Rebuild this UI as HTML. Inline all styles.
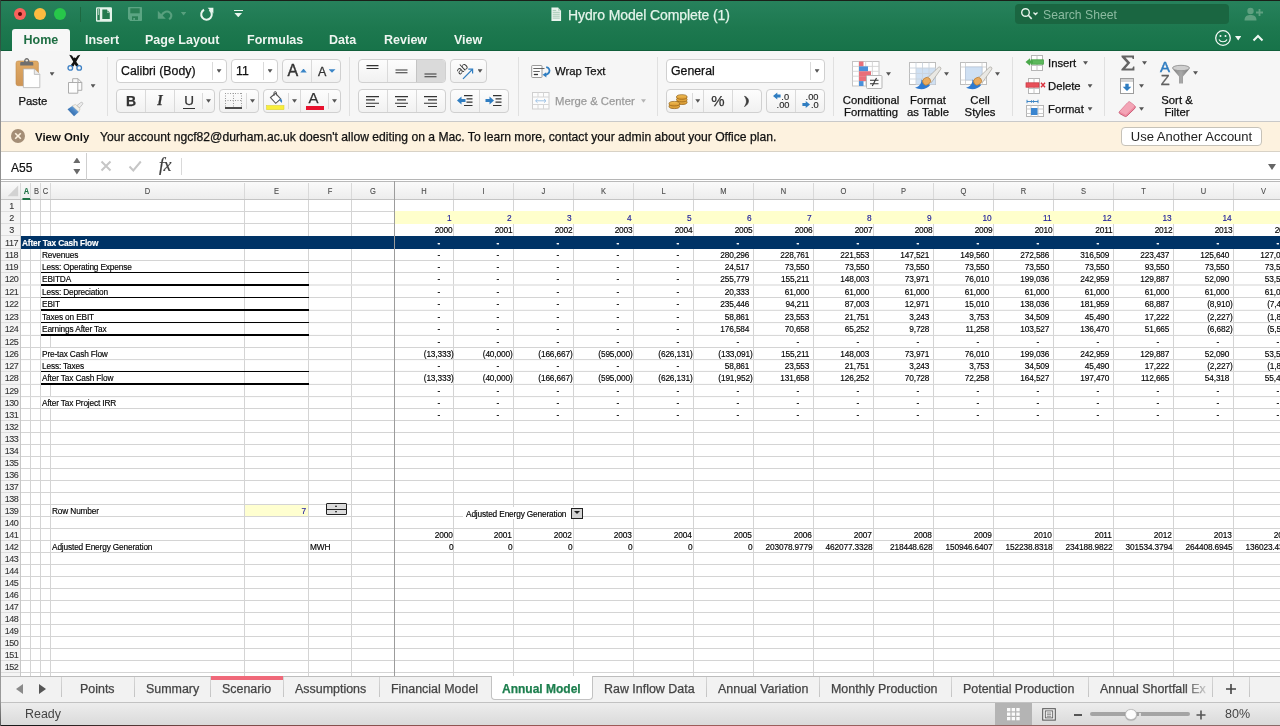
<!DOCTYPE html>
<html><head><meta charset="utf-8"><title>Hydro Model Complete (1)</title>
<style>
html,body{margin:0;padding:0}
body{width:1280px;height:726px;overflow:hidden;position:relative;background:#fff;font-family:"Liberation Sans",sans-serif;font-size:12px;color:#000}
div{box-sizing:border-box}
.abs{position:absolute}
#titlebar{position:absolute;left:0;top:0;width:1280px;height:51px;background:linear-gradient(#27825c 0px,#227d56 14px,#1d784f 28px,#177349 50px,#115f3b 50px,#115f3b 51px)}
#topstrip{position:absolute;left:0;top:0;width:1280px;height:1px;background:#1a1f18}
#leftedge{position:absolute;left:0;top:0;width:1px;height:726px;background:linear-gradient(#30443a 0,#2d5a44 50px,#8e8e8e 52px,#9a9a9a 700px,#555 726px)}
.tl{position:absolute;top:8px;width:12px;height:12px;border-radius:6px}
.tab{position:absolute;top:32px;height:16px;line-height:16px;font-size:12.5px;font-weight:bold;color:#fff;letter-spacing:0px;white-space:nowrap}
#hometab{position:absolute;left:12px;top:29px;width:58px;height:23px;background:#f7f7f7;border-radius:3px 3px 0 0}
#title{position:absolute;left:568px;top:7px;font-size:14px;color:#e4f4ea;white-space:nowrap;letter-spacing:-0.1px}
#search{position:absolute;left:1015px;top:4px;width:214px;height:20px;border-radius:4px;background:#1a6641}
#search span{position:absolute;left:28px;top:3px;font-size:12.2px;color:#8cbba1;line-height:16px;white-space:nowrap}
#ribbon{position:absolute;left:0;top:51px;width:1280px;height:71px;background:#f6f6f6;border-bottom:1px solid #c9c9c9}
.rsep{position:absolute;top:57px;width:1px;height:59px;background:#e0e0e0}
.btn{position:absolute;background:linear-gradient(#fdfdfd,#f1f1f1);border:1px solid #d0d0d0;border-radius:4px}
.rl{position:absolute;font-size:11.3px;color:#111;white-space:nowrap;line-height:13px}
.rl.dis{color:#9a9a9a}
.dd{position:absolute;width:0;height:0;border-left:3px solid transparent;border-right:3px solid transparent;border-top:4px solid #555}
#notif{position:absolute;left:0;top:122px;width:1280px;height:30px;background:#fdf2df;border-bottom:1px solid #d8d2c6}
#notif .t{position:absolute;top:8px;font-size:12px;line-height:14px;white-space:nowrap;color:#111}
#fbar{position:absolute;left:0;top:153px;width:1280px;height:27px;background:#fff;border-bottom:1px solid #b5b5b5}
#grid{position:absolute;left:0;top:0;width:1280px;height:676px;overflow:hidden;pointer-events:none}
#colhdr{position:absolute;left:0;top:181px;width:1280px;height:19px;background:linear-gradient(#fafafa,#ededed);border-top:1px solid #b9b9b9;border-bottom:1px solid #c4c4c4}
#rowhdr{position:absolute;left:1px;top:200px;width:20px;height:476px;background:#f4f4f4;border-right:1px solid #c8c8c8}
.ch{position:absolute;top:185px;height:12px;line-height:12px;font-size:8.4px;transform:scaleX(.9);text-align:center;color:#4a4a4a}
.ch.sel{color:#1e7145;font-weight:bold;border-bottom:2px solid #1e7145;height:15px}
.hs{position:absolute;top:183px;width:1px;height:16px;background:#d9d9d9}
.rh{position:absolute;left:2px;width:19px;height:12px;line-height:12px;text-align:center;font-size:9px;color:#333;letter-spacing:-0.45px}
.fill{position:absolute}
.c{position:absolute;height:12px;line-height:12px;font-size:8.3px;white-space:nowrap;color:#000;letter-spacing:-0.15px}
.c.blue{color:#1c1c9c}
.c.hd{color:#fff;font-weight:bold}
#tabs{position:absolute;left:0;top:676px;width:1280px;height:27px;background:#f2f2f2;border-top:1px solid #bdbdbd;border-bottom:1px solid #c2c2c2}
.st{position:absolute;top:682px;font-size:12.45px;line-height:15px;color:#444;white-space:nowrap}
.ts{position:absolute;top:677px;width:1px;height:20px;background:linear-gradient(#d6d6d6,#c4c4c4)}
#status{position:absolute;left:0;top:703px;width:1280px;height:23px;background:linear-gradient(#ededed,#d9d9d9)}
.bd{position:absolute;width:1px;background:#dadada}
.du{position:absolute;width:0;height:0;border-left:3.5px solid transparent;border-right:3.5px solid transparent;border-bottom:4.5px solid #3a85c7}
.btn.cb{background:#fff}
.rl.cbt{font-size:12.3px;line-height:15px}
.rl.ctr{text-align:center}
#root{position:absolute;left:0;top:0;width:1280px;height:726px;overflow:hidden;will-change:transform;transform:translateZ(0)}
.rl,#title,#notif .t,.st{-webkit-text-stroke:0.25px currentColor}
.tab{color:#eef5f0}
.dd{border-left-width:2.9px;border-right-width:2.9px;border-top-width:4px;border-top-color:#555;margin-left:-0.2px;margin-top:-0.2px}
.c{-webkit-text-stroke:0.15px currentColor}
.ch,.rh{-webkit-text-stroke:0.1px currentColor}
.tri{position:absolute}

</style></head>
<body>
<div id="root">
<div id="titlebar"></div>
<div id="topstrip"></div>
<div class="tl" style="left:14px;background:#f9625c"></div>
<div class="abs" style="left:18px;top:12px;width:4px;height:4px;border-radius:2px;background:#5c0a08"></div>
<div class="tl" style="left:34px;background:#fdbb40"></div>
<div class="tl" style="left:54px;background:#27c74a"></div>
<div class="abs" style="left:80px;top:7px;width:1px;height:15px;background:#1d6841"></div>
<!-- quick access icons -->
<svg class="abs" style="left:96px;top:6.500px" width="16" height="15" viewBox="0 0 16 15"><rect x="0" y="0.200" width="16" height="14.600" rx="1.200" fill="#e4f3ea"/><rect x="1.300" y="1.600" width="2.500" height="11.600" fill="#237a4e"/><circle cx="2.550" cy="3" r="0.650" fill="#e4f3ea"/><circle cx="2.550" cy="5" r="0.650" fill="#e4f3ea"/><circle cx="2.550" cy="7" r="0.650" fill="#e4f3ea"/><path d="M6.300 2.600h4.700l2.800 2.800v6.600h-7.500z" fill="#237a4e"/><path d="M11 2.600v2.800h2.800" fill="#e4f3ea"/><path d="M11.300 3.200l1.800 1.800h-1.800z" fill="#237a4e"/></svg>
<svg class="abs" style="left:128px;top:7px" width="14" height="14" viewBox="0 0 14 14"><path d="M0.800 0h12.400c.5 0 .8.300.8.800v12.400c0 .5-.3.800-.8.800h-11l-2.200-2.200v-11c0-.5.300-.8.800-.8z" fill="#5ba583"/><rect x="2.300" y="1.300" width="9.400" height="5" fill="#2a7f55"/><rect x="4" y="9.300" width="6" height="3.600" fill="#2a7f55"/><rect x="5.300" y="11" width="1.700" height="1.900" fill="#5ba583"/></svg>
<svg class="abs" style="left:156px;top:7px" width="18" height="15" viewBox="0 0 18 15"><path d="M1.800 3.800v8h8z" fill="#58a07e"/><path d="M5.500 8.500C7.500 4.200 11.500 3.600 13.800 5.500c2.400 2 1.900 5.200-.8 6.700" fill="none" stroke="#58a07e" stroke-width="2.100"/></svg>
<div class="tri" style="left:180.8px;top:12px;width:5.6px;height:3.6px;background:#58a07e;clip-path:polygon(0 0,100% 0,50% 100%)"></div>
<svg class="abs" style="left:199px;top:5px" width="16" height="18" viewBox="0 0 16 18"><path d="M9.300 4.500A5.300 5.300 0 1 1 4 5.400" fill="none" stroke="#e9f6ee" stroke-width="2" transform="rotate(12 7.600 9.900)"/><path d="M8.600 2.800h5.800v5.600z" fill="#e9f6ee"/></svg>
<div class="abs" style="left:234px;top:9.500px;width:8.500px;height:1.500px;background:#e9f6ee"></div>
<div class="tri" style="left:234px;top:12.5px;width:8.5px;height:4.7px;background:#e9f6ee;clip-path:polygon(0 0,100% 0,50% 100%)"></div>
<!-- title -->
<svg class="abs" style="left:551px;top:6.500px" width="10.500" height="14.500" viewBox="0 0 12 15" preserveAspectRatio="none"><path d="M0.500 0.500h7.500l3.500 3.500v10.500h-11z" fill="#e9f3ed"/><path d="M8 0.500v3.500h3.500z" fill="#b7d3c3"/><g stroke="#8fb9a1" stroke-width="0.800"><path d="M2 5.500h8M2 7.500h8M2 9.500h8M2 11.500h8M2 3.500h4"/></g></svg>
<div id="title">Hydro Model Complete (1)</div>
<div id="search"><span>Search Sheet</span>
<svg class="abs" style="left:5px;top:3px" width="22" height="14" viewBox="0 0 22 14"><circle cx="5.500" cy="5.500" r="3.800" fill="none" stroke="#e6f1ea" stroke-width="1.400"/><path d="M8.300 8.300l3.400 3.600" stroke="#e6f1ea" stroke-width="1.600"/><path d="M13.500 5.500l2 2 2-2" fill="none" stroke="#e6f1ea" stroke-width="1.300"/></svg>
</div>
<svg class="abs" style="left:1244px;top:7px" width="20" height="14" viewBox="0 0 20 14"><circle cx="6.500" cy="4" r="3.200" fill="#5fa080"/><path d="M0.500 13.500c0-4.500 3-5.500 6-5.500s6 1 6 5.500z" fill="#5fa080"/><path d="M15.500 2v7M12 5.500h7" stroke="#5fa080" stroke-width="1.800"/></svg>
<!-- tabs -->
<div id="hometab"></div>
<div class="tab" style="left:23.500px;color:#1e6e43">Home</div>
<div class="tab" style="left:85px">Insert</div>
<div class="tab" style="left:145px">Page Layout</div>
<div class="tab" style="left:247px">Formulas</div>
<div class="tab" style="left:329px">Data</div>
<div class="tab" style="left:384px">Review</div>
<div class="tab" style="left:454px">View</div>
<svg class="abs" style="left:1214px;top:29px" width="18" height="18" viewBox="0 0 18 18"><circle cx="9" cy="9" r="7.300" fill="none" stroke="#f2f8f4" stroke-width="1.300"/><circle cx="6.500" cy="7" r="1" fill="#f2f8f4"/><circle cx="11.500" cy="7" r="1" fill="#f2f8f4"/><path d="M5 10.500c1.500 3 6.500 3 8 0" fill="none" stroke="#f2f8f4" stroke-width="1.200"/></svg>
<div class="tri" style="left:1235px;top:36px;width:6.4px;height:4.5px;background:#f2f8f4;clip-path:polygon(0 0,100% 0,50% 100%)"></div>
<svg class="abs" style="left:1252px;top:34px" width="12" height="8" viewBox="0 0 12 8"><path d="M1.500 6.500l4.500-4.500 4.500 4.500" fill="none" stroke="#f2f8f4" stroke-width="2"/></svg>
<div id="ribbon"></div>
<!-- ===== Clipboard group ===== -->
<svg class="abs" style="left:15px;top:57px" width="26" height="32" viewBox="0 0 26 32"><defs><linearGradient id="gcb" x1="0" y1="0" x2="0" y2="1"><stop offset="0" stop-color="#e0ab66"/><stop offset="1" stop-color="#cf9555"/></linearGradient></defs><rect x="1" y="4" width="22.400" height="24.700" rx="2.200" fill="url(#gcb)" stroke="#c08a4c" stroke-width="0.600"/><path d="M5.200 8.600v-2.200c0-.9.500-1.400 1.400-1.400h2.300c.2-5.300 5.500-5.300 5.700 0h2.300c.9 0 1.400.5 1.400 1.400v2.200z" fill="#6e6e6e"/><ellipse cx="11.750" cy="3.500" rx="1.300" ry="1" fill="#f0e8dc"/><path d="M8.400 11.900h10.900l5.500 5.500v13.200h-16.400z" fill="#fefefe" stroke="#b4b4b4" stroke-width="0.800"/><path d="M19.300 11.900v5.500h5.500" fill="#ececec" stroke="#b4b4b4" stroke-width="0.800"/></svg>
<div class="tri" style="left:49.5px;top:72.2px;width:5px;height:3.6px;background:#555;clip-path:polygon(0 0,100% 0,50% 100%)"></div>
<div class="rl" style="left:18.500px;top:94.500px">Paste</div>
<svg class="abs" style="left:66px;top:54px" width="18" height="18" viewBox="0 0 18 18"><path d="M3.200 0.800L5.900 1.500 12.900 11.400 10.100 12.600z" fill="#111"/><path d="M14.300 0.800L11.600 1.500 4.600 11.400 7.400 12.600z" fill="#111"/><path d="M6.700 5.200L8.750 3.200 10.800 5.200 8.750 9.400z" fill="#111"/><circle cx="4.300" cy="13.900" r="2.300" fill="none" stroke="#3b7fc4" stroke-width="1.300"/><circle cx="13.200" cy="13.900" r="2.300" fill="none" stroke="#3b7fc4" stroke-width="1.300"/></svg>
<svg class="abs" style="left:67px;top:77px" width="16" height="18" viewBox="0 0 16 18"><path d="M5.700 1.700h5.300l3.800 3.800v7.800h-9.100z" fill="#fafafa" stroke="#a4a4a4" stroke-width="0.900"/><path d="M11 1.700v3.800h3.800" fill="none" stroke="#a4a4a4" stroke-width="0.900"/><path d="M1.500 5.500h9.300v10.700h-9.300z" fill="#fdfdfd" stroke="#a4a4a4" stroke-width="0.900"/></svg>
<div class="tri" style="left:90.5px;top:84.2px;width:5px;height:3.6px;background:#555;clip-path:polygon(0 0,100% 0,50% 100%)"></div>
<svg class="abs" style="left:66px;top:101px" width="18" height="17" viewBox="0 0 18 17"><defs><linearGradient id="gbr" x1="1" y1="0" x2="0" y2="1"><stop offset="0" stop-color="#9cc0e4"/><stop offset="0.450" stop-color="#4a86c5"/><stop offset="1" stop-color="#2a5c99"/></linearGradient></defs><path d="M11 4.500l3.800-3c1.200-.8 2.600.6 1.700 1.800l-3.100 3.700z" fill="#ececec" stroke="#a8a8a8" stroke-width="0.600"/><path d="M6.200 4.900l3.300-1.500 4.600 4.300-1.400 3.300z" fill="#f3f0e8" stroke="#b5b0a4" stroke-width="0.500"/><path d="M1.500 8.300l4.700-3.400 6.500 6.100-4.650 4.200z" fill="url(#gbr)"/></svg>
<div class="rsep" style="left:107px"></div>

<!-- ===== Font group ===== -->
<div class="btn cb" style="left:116px;top:59px;width:111px;height:24px"></div>
<div class="rl cbt" style="left:121px;top:63.700px">Calibri (Body)</div>
<div class="bd" style="left:212px;top:62px;height:18px"></div>
<div class="tri" style="left:216.5px;top:69.2px;width:5px;height:3.6px;background:#555;clip-path:polygon(0 0,100% 0,50% 100%)"></div>
<div class="btn cb" style="left:231px;top:59px;width:47px;height:24px"></div>
<div class="rl cbt" style="left:236px;top:63.700px">11</div>
<div class="bd" style="left:263px;top:62px;height:18px"></div>
<div class="tri" style="left:267.5px;top:69.2px;width:5px;height:3.6px;background:#555;clip-path:polygon(0 0,100% 0,50% 100%)"></div>
<div class="btn" style="left:282px;top:59px;width:59px;height:24px"></div>
<div class="bd" style="left:311px;top:60px;height:22px"></div>
<div class="rl" style="left:287.500px;top:61px;font-size:16px;line-height:20px;color:#333;-webkit-text-stroke:0.400px #333">A</div>
<div class="tri" style="left:300.3px;top:68.5px;width:6.4px;height:4px;background:#3a85c7;clip-path:polygon(50% 0,100% 100%,0 100%)"></div>
<div class="rl" style="left:318px;top:62.500px;font-size:12.500px;line-height:18px;color:#333;-webkit-text-stroke:0.300px #333">A</div>
<div class="tri" style="left:328.5px;top:69.2px;width:7px;height:3.6px;background:#3a85c7;clip-path:polygon(0 0,100% 0,50% 100%)"></div>

<div class="btn" style="left:116px;top:89px;width:99px;height:24px"></div>
<div class="bd" style="left:145px;top:90px;height:22px"></div>
<div class="bd" style="left:174px;top:90px;height:22px"></div>
<div class="bd" style="left:202px;top:93px;height:16px"></div>
<div class="rl" style="left:125px;top:92px;width:12px;text-align:center;font-weight:bold;font-size:14px;line-height:18px;color:#333">B</div>
<div class="rl" style="left:154px;top:92px;width:12px;text-align:center;font-style:italic;font-size:14px;line-height:18px;color:#333;font-family:'Liberation Serif',serif;font-weight:bold">I</div>
<div class="rl" style="left:183px;top:92px;width:12px;text-align:center;font-size:13.500px;line-height:17px;color:#333;border-bottom:1px solid #333;height:17px">U</div>
<div class="tri" style="left:206px;top:99.2px;width:5px;height:3.6px;background:#555;clip-path:polygon(0 0,100% 0,50% 100%)"></div>

<div class="btn" style="left:219px;top:89px;width:40px;height:24px"></div>
<svg class="abs" style="left:224px;top:92px" width="19" height="18" viewBox="0 0 19 18"><g stroke="#9a9a9a" stroke-width="1" stroke-dasharray="1 1.500"><path d="M1.500 1v14M9.500 1v14M17.500 1v14M1 1.500h17M1 8.500h17"/></g><path d="M1 16h17" stroke="#222" stroke-width="1.600"/></svg>
<div class="bd" style="left:246px;top:93px;height:16px"></div>
<div class="tri" style="left:250px;top:99.2px;width:5px;height:3.6px;background:#555;clip-path:polygon(0 0,100% 0,50% 100%)"></div>

<div class="btn" style="left:263px;top:89px;width:78px;height:24px"></div>
<svg class="abs" style="left:266px;top:91px" width="19" height="20" viewBox="0 0 19 20"><rect x="0.500" y="14.500" width="17.500" height="4.200" fill="#f8ee3a" stroke="#d8cd2a" stroke-width="0.500"/><path d="M4.500 6.500l5-4.200 5.200 5.700-5 4.300z" fill="#fff" stroke="#555" stroke-width="1.100"/><path d="M8 5V1.800c0-1.600 2.500-1.600 2.500 0v2.500" fill="none" stroke="#555" stroke-width="1"/><path d="M14.500 7.500c1.800 1 2 3 1.200 4.500-.8-1.300-1.800-2-2.700-2.800z" fill="#3a85c7"/></svg>
<div class="bd" style="left:288px;top:93px;height:16px"></div>
<div class="tri" style="left:292px;top:99.2px;width:5px;height:3.6px;background:#555;clip-path:polygon(0 0,100% 0,50% 100%)"></div>
<div class="bd" style="left:300px;top:90px;height:22px"></div>
<div class="rl" style="left:308.500px;top:89px;font-size:15px;line-height:18px;color:#333">A</div>
<div class="abs" style="left:306px;top:105.500px;width:18px;height:4.500px;background:#e8112d"></div>
<div class="bd" style="left:328px;top:93px;height:16px"></div>
<div class="tri" style="left:332px;top:99.2px;width:5px;height:3.6px;background:#555;clip-path:polygon(0 0,100% 0,50% 100%)"></div>
<div class="rsep" style="left:349px"></div>

<!-- ===== Alignment group ===== -->
<div class="btn" style="left:358px;top:59px;width:88px;height:24px"></div>
<div class="abs" style="left:416px;top:60px;width:29px;height:22px;background:#dadada;border-radius:0 3px 3px 0;border-left:1px solid #c4c4c4"></div>
<div class="bd" style="left:387px;top:60px;height:22px"></div>
<svg class="abs" style="left:358px;top:60px" width="88" height="22" viewBox="0 0 88 22"><g stroke="#333" stroke-width="1.050"><path d="M8.500 5.600h12M8.500 8.400h12"/><path d="M37.500 9.900h12M37.500 12.700h12"/><path d="M66.500 13.900h12M66.500 16.700h12"/></g></svg>
<div class="btn" style="left:450px;top:59px;width:37px;height:24px"></div>
<svg class="abs" style="left:455px;top:60px" width="22" height="22" viewBox="0 0 22 22"><text x="0" y="0" font-family="Liberation Sans" font-size="11" fill="#333" transform="translate(4.700 15.300) rotate(-42)">ab</text><path d="M8 18.800L17.300 9.500" stroke="#2f7dc1" stroke-width="1.200"/><path d="M13.300 9.200h4.300v4.300" fill="none" stroke="#2f7dc1" stroke-width="1.200"/></svg>
<div class="tri" style="left:477.5px;top:69.2px;width:5px;height:3.6px;background:#555;clip-path:polygon(0 0,100% 0,50% 100%)"></div>

<div class="btn" style="left:358px;top:89px;width:88px;height:24px"></div>
<div class="bd" style="left:387px;top:90px;height:22px"></div>
<div class="bd" style="left:416px;top:90px;height:22px"></div>
<svg class="abs" style="left:358px;top:90.600px" width="88" height="22" viewBox="0 0 88 22"><g stroke="#333" stroke-width="1.100"><path d="M8 5.600h13M8 8.900h9M8 12.200h13M8 15.500h9"/><path d="M37 5.600h13M39 8.900h9M37 12.200h13M39 15.500h9"/><path d="M66 5.600h13M70 8.900h9M66 12.200h13M70 15.500h9"/></g></svg>
<div class="btn" style="left:450px;top:89px;width:59px;height:24px"></div>
<div class="bd" style="left:479px;top:90px;height:22px"></div>
<svg class="abs" style="left:451px;top:90px" width="58" height="22" viewBox="0 0 58 22"><g stroke="#333" stroke-width="1.200"><path d="M13 5.600h8.500M15.500 8.900h6M15.500 12.200h6M13 15.500h8.500"/><path d="M42 5.600h8.500M44.500 8.900h6M44.500 12.200h6M42 15.500h8.500"/></g><path d="M6 10.500l4.500-4v2.400h4v3.200h-4v2.400z" fill="#2f7dc1"/><path d="M43 10.500l-4.500-4v2.400h-4v3.200h4v2.400z" fill="#2f7dc1"/></svg>
<div class="rsep" style="left:518px"></div>

<svg class="abs" style="left:530px;top:62px" width="23" height="18" viewBox="0 0 23 18"><rect x="1.700" y="3.500" width="10.300" height="12" rx="0.800" fill="#fdfdfd" stroke="#8e8e8e" stroke-width="0.900"/><path d="M3.300 6.500h11.200M3.300 9.500h6.500" stroke="#555" stroke-width="0.900"/><path d="M3.800 12.500h4.200" stroke="#333" stroke-width="1.300"/><path d="M16.200 5.200c3 .6 3.800 3 3 5-.8 1.900-2.400 2.600-4.400 2.700" fill="none" stroke="#2f7dc1" stroke-width="1.800"/><path d="M16.200 10.200l-3.600 2.600 3.800 2.600z" fill="#2f7dc1"/></svg>
<div class="rl" style="left:555px;top:64.500px">Wrap Text</div>
<svg class="abs" style="left:531px;top:91px" width="20" height="20" viewBox="0 0 20 20"><rect x="1.500" y="1.500" width="16.500" height="16.500" fill="#fcfcfc" stroke="#cfcfcf"/><path d="M1.500 6h16.500M1.500 13.500h16.500M7 1.500v4.500M12.500 1.500v4.500M7 13.500v4.500M12.500 13.500v4.500" stroke="#d6d6d6"/><path d="M5 9.800h9.500M6.500 8l-2 1.800 2 1.800M13 8l2 1.800-2 1.800" fill="none" stroke="#9fc3e6" stroke-width="1"/></svg>
<div class="rl dis" style="left:555px;top:94.500px">Merge &amp; Center</div>
<div class="tri" style="left:641px;top:99.2px;width:5px;height:3.6px;background:#b4b4b4;clip-path:polygon(0 0,100% 0,50% 100%)"></div>
<div class="rsep" style="left:657px"></div>

<!-- ===== Number group ===== -->
<div class="btn cb" style="left:666px;top:59px;width:159px;height:24px"></div>
<div class="rl cbt" style="left:671px;top:63.700px">General</div>
<div class="bd" style="left:810px;top:62px;height:18px"></div>
<div class="tri" style="left:814.5px;top:69.2px;width:5px;height:3.6px;background:#555;clip-path:polygon(0 0,100% 0,50% 100%)"></div>
<div class="btn" style="left:666px;top:89px;width:96px;height:24px"></div>
<div class="bd" style="left:691.500px;top:93px;height:16px"></div>
<svg class="abs" style="left:668px;top:92px" width="21" height="18" viewBox="0 0 21 18"><defs><linearGradient id="gco" x1="0" y1="0" x2="0" y2="1"><stop offset="0" stop-color="#f2c25a"/><stop offset="1" stop-color="#d9952c"/></linearGradient></defs><g fill="url(#gco)" stroke="#8f5f14" stroke-width="0.700"><ellipse cx="13.800" cy="10.200" rx="5.300" ry="2.300"/><ellipse cx="13.800" cy="7.600" rx="5.300" ry="2.300"/><ellipse cx="13.800" cy="5" rx="5.300" ry="2.300"/><ellipse cx="6.300" cy="14.300" rx="5.300" ry="2.300"/><ellipse cx="6.300" cy="11.700" rx="5.300" ry="2.300"/></g></svg>
<div class="tri" style="left:695.3px;top:99.2px;width:5px;height:3.6px;background:#555;clip-path:polygon(0 0,100% 0,50% 100%)"></div>
<div class="bd" style="left:703px;top:90px;height:22px"></div>
<div class="rl" style="left:708px;top:92px;width:20px;text-align:center;font-size:15px;line-height:18px;color:#333">%</div>
<div class="bd" style="left:732px;top:90px;height:22px"></div>
<svg class="abs" style="left:742px;top:95px" width="10" height="14" viewBox="0 0 10 14"><path d="M2.500 1.300c5 1.200 5.600 7.500 0 10.200 2.600-3.200 2.600-7 0-10.200z" fill="#3a3a3a" stroke="#3a3a3a" stroke-width="0.700" stroke-linejoin="round"/></svg>
<div class="btn" style="left:766px;top:89px;width:59px;height:24px"></div>
<div class="bd" style="left:795px;top:90px;height:22px"></div>
<svg class="abs" style="left:767px;top:90px" width="58" height="22" viewBox="0 0 58 22"><g font-family="Liberation Sans" font-size="9.300" fill="#2b2b2b" stroke="#2b2b2b" stroke-width="0.150"><text x="14.300" y="9.700">.0</text><text x="9.600" y="18.200">.00</text><text x="38.600" y="9.700">.00</text><text x="44" y="18.200">.0</text></g><path d="M6 6l4.300-3.600v2.200h3.300v2.800h-3.300v2.200z" fill="#2f7dc1"/><path d="M43 14.500l-4.300-3.600v2.200h-3.300v2.800h3.300v2.200z" fill="#2f7dc1"/></svg>
<div class="rsep" style="left:833px"></div>
<!-- ===== Styles group ===== -->
<svg class="abs" style="left:851px;top:60px" width="32" height="30" viewBox="0 0 32 30"><rect x="1.500" y="1.500" width="26.500" height="24.500" fill="#fff" stroke="#c4c4c4"/><path d="M8 1.500v24.500M14.700 1.500v24.500M21.400 1.500v24.500M1.500 6.400h26.500M1.500 11.300h26.500M1.500 16.200h26.500M1.500 21.100h26.500" stroke="#d4d4d4" stroke-width="0.900"/><rect x="8" y="1.500" width="4.500" height="4.900" fill="#e8707a"/><rect x="8" y="6.400" width="9" height="4.900" fill="#4a90d9"/><rect x="8" y="11.300" width="12" height="4.900" fill="#e8707a"/><rect x="8" y="16.200" width="7.500" height="4.900" fill="#e8707a"/><rect x="8" y="21.100" width="4.500" height="4.900" fill="#4a90d9"/><rect x="15.500" y="15.500" width="15.500" height="13" rx="1" fill="#fbfbfb" stroke="#b5b5b5"/><path d="M19 20.300h8.500M19 23.700h8.500M25.500 18l-4.200 8" stroke="#333" stroke-width="1.100"/></svg>
<div class="tri" style="left:886px;top:72.2px;width:5px;height:3.6px;background:#555;clip-path:polygon(0 0,100% 0,50% 100%)"></div>
<div class="rl ctr" style="left:831px;top:94px;width:80px">Conditional</div>
<div class="rl ctr" style="left:831px;top:106px;width:80px">Formatting</div>

<svg class="abs" style="left:908px;top:60px" width="36" height="30" viewBox="0 0 36 30"><rect x="1.500" y="2.500" width="26" height="22" fill="#fff" stroke="#bdbdbd"/><rect x="8" y="8" width="19.500" height="16.500" fill="#cfe0f3"/><path d="M8 2.500v22M14.500 2.500v22M21 2.500v22M1.500 8h26M1.500 13.500h26M1.500 19h26" stroke="#c9d3dd" stroke-width="0.900"/><path d="M13.400 19.600C13.600 23.800 11 26.800 7 27.800C12.500 30.200 19.200 29.400 22.200 25z" fill="#2e7ad0"/><path d="M18.800 18.600L30.300 7.400c1.500-1.300 3.500.4 2.300 2L23.200 22.800z" fill="#e9e8e4" stroke="#a3a09a" stroke-width="0.700"/><ellipse cx="18.600" cy="21.200" rx="4.100" ry="3.600" transform="rotate(-38 18.600 21.200)" fill="#eaac60" stroke="#b97d33" stroke-width="0.700"/></svg>
<div class="tri" style="left:944px;top:72.2px;width:5px;height:3.6px;background:#555;clip-path:polygon(0 0,100% 0,50% 100%)"></div>
<div class="rl ctr" style="left:888px;top:94px;width:80px">Format</div>
<div class="rl ctr" style="left:888px;top:106px;width:80px">as Table</div>

<svg class="abs" style="left:959px;top:60px" width="36" height="30" viewBox="0 0 36 30"><rect x="1.500" y="2.500" width="26" height="22" fill="#fff" stroke="#bdbdbd"/><path d="M6.500 2.500v22M23 2.500v22M1.500 7h26M1.500 20h26" stroke="#cfcfcf" stroke-width="0.900"/><rect x="6.500" y="7" width="16.500" height="13" fill="#cfe0f3" stroke="#b5c7dc" stroke-width="0.700"/><path d="M13.400 19.600C13.600 23.800 11 26.800 7 27.800C12.500 30.200 19.200 29.400 22.200 25z" fill="#2e7ad0"/><path d="M18.800 18.600L30.300 7.400c1.500-1.300 3.500.4 2.300 2L23.200 22.800z" fill="#e9e8e4" stroke="#a3a09a" stroke-width="0.700"/><ellipse cx="18.600" cy="21.200" rx="4.100" ry="3.600" transform="rotate(-38 18.600 21.200)" fill="#eaac60" stroke="#b97d33" stroke-width="0.700"/></svg>
<div class="tri" style="left:995px;top:72.2px;width:5px;height:3.6px;background:#555;clip-path:polygon(0 0,100% 0,50% 100%)"></div>
<div class="rl ctr" style="left:940px;top:94px;width:80px">Cell</div>
<div class="rl ctr" style="left:940px;top:106px;width:80px">Styles</div>
<div class="rsep" style="left:1012px"></div>

<!-- ===== Cells group ===== -->
<svg class="abs" style="left:1025px;top:54px" width="20" height="18" viewBox="0 0 20 18"><rect x="6.500" y="1.500" width="11" height="15" fill="#fff" stroke="#b5b5b5"/><path d="M12 1.500v15M6.500 6.500h11M6.500 11.500h11" stroke="#c4c4c4"/><rect x="6" y="5.800" width="12.500" height="4.400" fill="#5cb85c" stroke="#3d9a3d" stroke-width="0.700"/><path d="M0.500 8l4.500-3.800v2.300h3v3h-3v2.300z" fill="#4aa84a"/></svg>
<div class="rl" style="left:1048px;top:56.500px">Insert</div>
<div class="tri" style="left:1083px;top:61.2px;width:5px;height:3.6px;background:#555;clip-path:polygon(0 0,100% 0,50% 100%)"></div>
<svg class="abs" style="left:1025px;top:77px" width="21" height="18" viewBox="0 0 21 18"><rect x="3.500" y="1.500" width="11" height="15" fill="#fff" stroke="#b5b5b5"/><path d="M9 1.500v15M3.500 6.500h11M3.500 11.500h11" stroke="#c4c4c4"/><rect x="1" y="5.800" width="13" height="4.400" fill="#e8505a" stroke="#c73540" stroke-width="0.700"/><path d="M16 5.800l4 4.400M20 5.800l-4 4.400" stroke="#d9303c" stroke-width="1.400"/></svg>
<div class="rl" style="left:1048px;top:79.500px">Delete</div>
<div class="tri" style="left:1087.5px;top:84.2px;width:5px;height:3.6px;background:#555;clip-path:polygon(0 0,100% 0,50% 100%)"></div>
<svg class="abs" style="left:1025px;top:99px" width="20" height="19" viewBox="0 0 20 19"><path d="M2 2.500h11M2 0.800v3.400M13 0.800v3.400M5.500 2.500l1.300-1.200M5.500 2.500l1.300 1.200M9.500 2.500l-1.300-1.200M9.500 2.500l-1.300 1.200" stroke="#2f7dc1" stroke-width="0.900"/><rect x="1.500" y="6.500" width="17" height="11" fill="#fff" stroke="#b5b5b5"/><path d="M6 6.500v11M13 6.500v11M1.500 10h17M1.500 14.500h17" stroke="#c9c9c9"/><rect x="6" y="9" width="6.500" height="7" fill="#3a85d0"/></svg>
<div class="rl" style="left:1048px;top:102.500px">Format</div>
<div class="tri" style="left:1087.5px;top:107.2px;width:5px;height:3.6px;background:#555;clip-path:polygon(0 0,100% 0,50% 100%)"></div>
<div class="rsep" style="left:1104px"></div>

<!-- ===== Editing group ===== -->
<svg class="abs" style="left:1120px;top:54px" width="16" height="18" viewBox="0 0 16 18"><path d="M1.500 1.500h12.500v3.500h-1.300l-.6-1.600h-6.600l4.800 5.400-5 5.700h7l.8-2h1.300v4h-13v-1.300l5.600-6.300-5.500-6z" fill="#646464"/></svg>
<div class="tri" style="left:1142px;top:61.2px;width:5px;height:3.6px;background:#555;clip-path:polygon(0 0,100% 0,50% 100%)"></div>
<svg class="abs" style="left:1119px;top:77px" width="16" height="18" viewBox="0 0 16 18"><rect x="1.500" y="1.500" width="13" height="15" fill="#fff" stroke="#9c9c9c"/><rect x="2" y="2" width="12" height="3" fill="#d4d4d4"/><path d="M8 14l-4.300-4.200h2.600v-3h3.400v3h2.600z" fill="#2f7dc1"/></svg>
<div class="tri" style="left:1139px;top:84.2px;width:5px;height:3.6px;background:#555;clip-path:polygon(0 0,100% 0,50% 100%)"></div>
<svg class="abs" style="left:1118px;top:100px" width="19" height="18" viewBox="0 0 19 18"><path d="M1.500 11.500L10 2.500c.8-.8 1.800-.8 2.600 0l4.200 3.500c.8.800.6 1.700 0 2.400l-8 7.700c-.8.700-1.800.5-2.500 0l-4.500-2.500c-.8-.6-.8-1.500-.3-2.100z" fill="#ee8aa0" stroke="#c5526e" stroke-width="0.900"/><path d="M1.500 11.500L10 2.500c.8-.8 1.800-.8 2.600 0l4.200 3.500-9 8.800z" fill="#f3a5b6"/></svg>
<div class="tri" style="left:1139px;top:107.2px;width:5px;height:3.6px;background:#555;clip-path:polygon(0 0,100% 0,50% 100%)"></div>
<svg class="abs" style="left:1158px;top:60px" width="34" height="28" viewBox="0 0 34 28"><text x="2" y="12.200" font-family="Liberation Sans" font-size="15" fill="#2f7dc1" stroke="#2f7dc1" stroke-width="0.450">A</text><text x="2.800" y="24.800" font-family="Liberation Sans" font-size="14.500" fill="#606060" stroke="#606060" stroke-width="0.300">Z</text><defs><linearGradient id="gfn" x1="0" y1="0" x2="1" y2="0"><stop offset="0" stop-color="#7f7f7f"/><stop offset="0.500" stop-color="#a9a9a9"/><stop offset="1" stop-color="#7a7a7a"/></linearGradient></defs><path d="M14.700 9c2 1.800 14.600 1.800 16.600 0l-6.300 7.500v7l-4 0v-7z" fill="url(#gfn)"/><ellipse cx="23" cy="8" rx="8.500" ry="2.700" fill="#cfcfcf" stroke="#8a8a8a" stroke-width="0.800"/></svg>
<div class="tri" style="left:1193px;top:71.2px;width:5px;height:3.6px;background:#555;clip-path:polygon(0 0,100% 0,50% 100%)"></div>
<div class="rl ctr" style="left:1137px;top:94px;width:80px">Sort &amp;</div>
<div class="rl ctr" style="left:1137px;top:106px;width:80px">Filter</div>
<div id="notif">
<svg class="abs" style="left:10px;top:6px" width="16" height="16" viewBox="0 0 16 16"><circle cx="8" cy="8" r="7" fill="#a48e76"/><path d="M5.200 5.200l5.600 5.600M10.800 5.200l-5.600 5.600" stroke="#fdf2df" stroke-width="1.600"/></svg>
<div class="t" style="left:35px;font-weight:bold;font-size:11.400px;-webkit-text-stroke:0">View Only</div>
<div class="t" style="left:100px;font-size:12.130px">Your account ngcf82@durham.ac.uk doesn't allow editing on a Mac. To learn more, contact your admin about your Office plan.</div>
<div class="abs" style="left:1121px;top:5px;width:141px;height:19px;background:#fff;border:1px solid #c6c2b8;border-radius:4px;font-size:13px;line-height:17px;text-align:center;color:#222">Use Another Account</div>
</div>
<div id="fbar">
<div class="abs" style="left:11px;top:7.500px;font-size:12px;line-height:14px;color:#111;-webkit-text-stroke:0.200px #111">A55</div>
<div class="tri" style="left:73.3px;top:4.5px;width:7.2px;height:5.5px;background:#6a6a6a;clip-path:polygon(50% 0,100% 100%,0 100%)"></div>
<div class="tri" style="left:73.3px;top:16px;width:7.2px;height:5.5px;background:#6a6a6a;clip-path:polygon(0 0,100% 0,50% 100%)"></div>
<div class="abs" style="left:86px;top:0;width:1px;height:27px;background:#cfcfcf"></div>
<svg class="abs" style="left:100px;top:7px" width="12" height="12" viewBox="0 0 12 12"><path d="M1.500 1.500l9 9M10.500 1.500l-9 9" stroke="#c6c6c6" stroke-width="2"/></svg>
<svg class="abs" style="left:128px;top:7px" width="14" height="12" viewBox="0 0 14 12"><path d="M1.500 6.500l3.800 4 7.500-9" fill="none" stroke="#c6c6c6" stroke-width="2"/></svg>
<div class="abs" style="left:159px;top:2px;font-family:'Liberation Serif',serif;font-style:italic;font-size:18px;line-height:20px;color:#3c3c3c;letter-spacing:-0.500px;-webkit-text-stroke:0.200px #3c3c3c">fx</div>
<div class="abs" style="left:181px;top:5px;width:1px;height:17px;background:#d9d9d9"></div>
<div class="tri" style="left:1268px;top:11px;width:8px;height:6px;background:#666;clip-path:polygon(0 0,100% 0,50% 100%)"></div>
</div>
<div id="grid">
<div id="colhdr"></div>
<div id="rowhdr"></div>
<svg class="abs" style="left:7px;top:185px" width="12" height="12" viewBox="0 0 12 12"><path d="M0.600 11.200L11.200 0.600V11.200z" fill="#d2d2d2"/></svg>
<div class="ch sel" style="left:21.8px;width:9px">A</div>
<div class="ch" style="left:32.2px;width:9px">B</div>
<div class="ch" style="left:41.3px;width:9px">C</div>
<div class="ch" style="left:51.3px;width:193px">D</div>
<div class="ch" style="left:245.3px;width:63px">E</div>
<div class="ch" style="left:309.3px;width:42px">F</div>
<div class="ch" style="left:352.3px;width:42px">G</div>
<div class="ch" style="left:395.3px;width:58px">H</div>
<div class="ch" style="left:454.3px;width:59px">I</div>
<div class="ch" style="left:514.3px;width:59px">J</div>
<div class="ch" style="left:574.3px;width:59px">K</div>
<div class="ch" style="left:634.3px;width:59px">L</div>
<div class="ch" style="left:694.3px;width:59px">M</div>
<div class="ch" style="left:754.3px;width:59px">N</div>
<div class="ch" style="left:814.3px;width:59px">O</div>
<div class="ch" style="left:874.3px;width:59px">P</div>
<div class="ch" style="left:934.3px;width:59px">Q</div>
<div class="ch" style="left:994.3px;width:59px">R</div>
<div class="ch" style="left:1054.3px;width:59px">S</div>
<div class="ch" style="left:1114.3px;width:59px">T</div>
<div class="ch" style="left:1174.3px;width:59px">U</div>
<div class="ch" style="left:1234.3px;width:59px">V</div>
<div class="hs" style="left:20px"></div>
<div class="hs" style="left:30px"></div>
<div class="hs" style="left:40px"></div>
<div class="hs" style="left:50px"></div>
<div class="hs" style="left:244px"></div>
<div class="hs" style="left:308px"></div>
<div class="hs" style="left:351px"></div>
<div class="hs" style="left:453px"></div>
<div class="hs" style="left:513px"></div>
<div class="hs" style="left:573px"></div>
<div class="hs" style="left:633px"></div>
<div class="hs" style="left:693px"></div>
<div class="hs" style="left:753px"></div>
<div class="hs" style="left:813px"></div>
<div class="hs" style="left:873px"></div>
<div class="hs" style="left:933px"></div>
<div class="hs" style="left:993px"></div>
<div class="hs" style="left:1053px"></div>
<div class="hs" style="left:1113px"></div>
<div class="hs" style="left:1173px"></div>
<div class="hs" style="left:1233px"></div>
<div class="hs" style="left:1293px"></div>
<div class="rh" style="top:200px">1</div>
<div class="rh" style="top:212px">2</div>
<div class="rh" style="top:224px">3</div>
<div class="rh" style="top:237px">117</div>
<div class="rh" style="top:249px">118</div>
<div class="rh" style="top:261px">119</div>
<div class="rh" style="top:273px">120</div>
<div class="rh" style="top:286px">121</div>
<div class="rh" style="top:298px">122</div>
<div class="rh" style="top:311px">123</div>
<div class="rh" style="top:323px">124</div>
<div class="rh" style="top:336px">125</div>
<div class="rh" style="top:348px">126</div>
<div class="rh" style="top:360px">127</div>
<div class="rh" style="top:372px">128</div>
<div class="rh" style="top:385px">129</div>
<div class="rh" style="top:397px">130</div>
<div class="rh" style="top:409px">131</div>
<div class="rh" style="top:421px">132</div>
<div class="rh" style="top:433px">133</div>
<div class="rh" style="top:445px">134</div>
<div class="rh" style="top:457px">135</div>
<div class="rh" style="top:469px">136</div>
<div class="rh" style="top:481px">137</div>
<div class="rh" style="top:493px">138</div>
<div class="rh" style="top:505px">139</div>
<div class="rh" style="top:517px">140</div>
<div class="rh" style="top:529px">141</div>
<div class="rh" style="top:541px">142</div>
<div class="rh" style="top:553px">143</div>
<div class="rh" style="top:565px">144</div>
<div class="rh" style="top:577px">145</div>
<div class="rh" style="top:589px">146</div>
<div class="rh" style="top:601px">147</div>
<div class="rh" style="top:613px">148</div>
<div class="rh" style="top:625px">149</div>
<div class="rh" style="top:637px">150</div>
<div class="rh" style="top:649px">151</div>
<div class="rh" style="top:661px">152</div>
<div class="fill" style="left:395px;top:211px;width:885px;height:12.700px;background:#ffffcc"></div>
<div class="fill" style="left:21px;top:236px;width:1259px;height:13px;background:#003366"></div>
<div class="fill" style="left:245px;top:505.1px;width:64px;height:12px;background:#ffffd0"></div>
<svg id="lines" width="1280" height="500" viewBox="0 176 1280 500" style="position:absolute;left:0;top:176px"><rect x="1" y="211" width="19" height="1" fill="#dedede"/><rect x="21" y="211" width="374" height="1" fill="#d4d4d4"/><rect x="1" y="223" width="19" height="1" fill="#dedede"/><rect x="21" y="223" width="374" height="1" fill="#d4d4d4"/><rect x="1" y="235" width="19" height="1" fill="#dedede"/><rect x="1" y="248" width="19" height="1" fill="#dedede"/><rect x="1" y="260" width="19" height="1" fill="#dedede"/><rect x="21" y="260" width="1259" height="1" fill="#d4d4d4"/><rect x="1" y="272" width="19" height="1" fill="#dedede"/><rect x="21" y="272" width="1259" height="1" fill="#d4d4d4"/><rect x="1" y="284.5" width="19" height="1" fill="#dedede"/><rect x="21" y="284.5" width="1259" height="1" fill="#d4d4d4"/><rect x="1" y="297" width="19" height="1" fill="#dedede"/><rect x="21" y="297" width="1259" height="1" fill="#d4d4d4"/><rect x="1" y="309.8" width="19" height="1" fill="#dedede"/><rect x="21" y="309.8" width="1259" height="1" fill="#d4d4d4"/><rect x="1" y="322.1" width="19" height="1" fill="#dedede"/><rect x="21" y="322.1" width="1259" height="1" fill="#d4d4d4"/><rect x="1" y="334.9" width="19" height="1" fill="#dedede"/><rect x="21" y="334.9" width="1259" height="1" fill="#d4d4d4"/><rect x="1" y="347" width="19" height="1" fill="#dedede"/><rect x="21" y="347" width="1259" height="1" fill="#d4d4d4"/><rect x="1" y="359.1" width="19" height="1" fill="#dedede"/><rect x="21" y="359.1" width="1259" height="1" fill="#d4d4d4"/><rect x="1" y="370.9" width="19" height="1" fill="#dedede"/><rect x="21" y="370.9" width="1259" height="1" fill="#d4d4d4"/><rect x="1" y="383.9" width="19" height="1" fill="#dedede"/><rect x="21" y="383.9" width="1259" height="1" fill="#d4d4d4"/><rect x="1" y="396.1" width="19" height="1" fill="#dedede"/><rect x="21" y="396.1" width="1259" height="1" fill="#d4d4d4"/><rect x="1" y="408" width="19" height="1" fill="#dedede"/><rect x="21" y="408" width="1259" height="1" fill="#d4d4d4"/><rect x="1" y="420" width="19" height="1" fill="#dedede"/><rect x="21" y="420" width="1259" height="1" fill="#d4d4d4"/><rect x="1" y="432" width="19" height="1" fill="#dedede"/><rect x="21" y="432" width="1259" height="1" fill="#d4d4d4"/><rect x="1" y="444" width="19" height="1" fill="#dedede"/><rect x="21" y="444" width="1259" height="1" fill="#d4d4d4"/><rect x="1" y="456" width="19" height="1" fill="#dedede"/><rect x="21" y="456" width="1259" height="1" fill="#d4d4d4"/><rect x="1" y="468" width="19" height="1" fill="#dedede"/><rect x="21" y="468" width="1259" height="1" fill="#d4d4d4"/><rect x="1" y="480" width="19" height="1" fill="#dedede"/><rect x="21" y="480" width="1259" height="1" fill="#d4d4d4"/><rect x="1" y="492" width="19" height="1" fill="#dedede"/><rect x="21" y="492" width="1259" height="1" fill="#d4d4d4"/><rect x="1" y="504" width="19" height="1" fill="#dedede"/><rect x="21" y="504" width="1259" height="1" fill="#d4d4d4"/><rect x="1" y="516" width="19" height="1" fill="#dedede"/><rect x="21" y="516" width="1259" height="1" fill="#d4d4d4"/><rect x="1" y="528" width="19" height="1" fill="#dedede"/><rect x="21" y="528" width="1259" height="1" fill="#d4d4d4"/><rect x="1" y="540" width="19" height="1" fill="#dedede"/><rect x="21" y="540" width="1259" height="1" fill="#d4d4d4"/><rect x="1" y="552" width="19" height="1" fill="#dedede"/><rect x="21" y="552" width="1259" height="1" fill="#d4d4d4"/><rect x="1" y="564" width="19" height="1" fill="#dedede"/><rect x="21" y="564" width="1259" height="1" fill="#d4d4d4"/><rect x="1" y="576" width="19" height="1" fill="#dedede"/><rect x="21" y="576" width="1259" height="1" fill="#d4d4d4"/><rect x="1" y="588" width="19" height="1" fill="#dedede"/><rect x="21" y="588" width="1259" height="1" fill="#d4d4d4"/><rect x="1" y="600" width="19" height="1" fill="#dedede"/><rect x="21" y="600" width="1259" height="1" fill="#d4d4d4"/><rect x="1" y="612" width="19" height="1" fill="#dedede"/><rect x="21" y="612" width="1259" height="1" fill="#d4d4d4"/><rect x="1" y="624" width="19" height="1" fill="#dedede"/><rect x="21" y="624" width="1259" height="1" fill="#d4d4d4"/><rect x="1" y="636" width="19" height="1" fill="#dedede"/><rect x="21" y="636" width="1259" height="1" fill="#d4d4d4"/><rect x="1" y="648" width="19" height="1" fill="#dedede"/><rect x="21" y="648" width="1259" height="1" fill="#d4d4d4"/><rect x="1" y="660" width="19" height="1" fill="#dedede"/><rect x="21" y="660" width="1259" height="1" fill="#d4d4d4"/><rect x="1" y="672" width="19" height="1" fill="#dedede"/><rect x="21" y="672" width="1259" height="1" fill="#d4d4d4"/><rect x="30" y="200" width="1" height="11" fill="#d4d4d4"/><rect x="30" y="212" width="1" height="11" fill="#d4d4d4"/><rect x="30" y="224" width="1" height="12" fill="#d4d4d4"/><rect x="30" y="249" width="1" height="11" fill="#d4d4d4"/><rect x="30" y="261" width="1" height="11" fill="#d4d4d4"/><rect x="30" y="273" width="1" height="11.5" fill="#d4d4d4"/><rect x="30" y="285.5" width="1" height="11.5" fill="#d4d4d4"/><rect x="30" y="298" width="1" height="11.8" fill="#d4d4d4"/><rect x="30" y="310.8" width="1" height="11.3" fill="#d4d4d4"/><rect x="30" y="323.1" width="1" height="11.8" fill="#d4d4d4"/><rect x="30" y="335.9" width="1" height="11.1" fill="#d4d4d4"/><rect x="30" y="348" width="1" height="11.1" fill="#d4d4d4"/><rect x="30" y="360.1" width="1" height="10.8" fill="#d4d4d4"/><rect x="30" y="371.9" width="1" height="12" fill="#d4d4d4"/><rect x="30" y="384.9" width="1" height="11.2" fill="#d4d4d4"/><rect x="30" y="397.1" width="1" height="10.9" fill="#d4d4d4"/><rect x="30" y="409" width="1" height="11" fill="#d4d4d4"/><rect x="30" y="421" width="1" height="11" fill="#d4d4d4"/><rect x="30" y="433" width="1" height="11" fill="#d4d4d4"/><rect x="30" y="445" width="1" height="11" fill="#d4d4d4"/><rect x="30" y="457" width="1" height="11" fill="#d4d4d4"/><rect x="30" y="469" width="1" height="11" fill="#d4d4d4"/><rect x="30" y="481" width="1" height="11" fill="#d4d4d4"/><rect x="30" y="493" width="1" height="11" fill="#d4d4d4"/><rect x="30" y="505" width="1" height="11" fill="#d4d4d4"/><rect x="30" y="517" width="1" height="11" fill="#d4d4d4"/><rect x="30" y="529" width="1" height="11" fill="#d4d4d4"/><rect x="30" y="541" width="1" height="11" fill="#d4d4d4"/><rect x="30" y="553" width="1" height="11" fill="#d4d4d4"/><rect x="30" y="565" width="1" height="11" fill="#d4d4d4"/><rect x="30" y="577" width="1" height="11" fill="#d4d4d4"/><rect x="30" y="589" width="1" height="11" fill="#d4d4d4"/><rect x="30" y="601" width="1" height="11" fill="#d4d4d4"/><rect x="30" y="613" width="1" height="11" fill="#d4d4d4"/><rect x="30" y="625" width="1" height="11" fill="#d4d4d4"/><rect x="30" y="637" width="1" height="11" fill="#d4d4d4"/><rect x="30" y="649" width="1" height="11" fill="#d4d4d4"/><rect x="30" y="661" width="1" height="11" fill="#d4d4d4"/><rect x="40" y="200" width="1" height="11" fill="#d4d4d4"/><rect x="40" y="212" width="1" height="11" fill="#d4d4d4"/><rect x="40" y="224" width="1" height="12" fill="#d4d4d4"/><rect x="40" y="249" width="1" height="11" fill="#d4d4d4"/><rect x="40" y="261" width="1" height="11" fill="#d4d4d4"/><rect x="40" y="273" width="1" height="11.5" fill="#d4d4d4"/><rect x="40" y="285.5" width="1" height="11.5" fill="#d4d4d4"/><rect x="40" y="298" width="1" height="11.8" fill="#d4d4d4"/><rect x="40" y="310.8" width="1" height="11.3" fill="#d4d4d4"/><rect x="40" y="323.1" width="1" height="11.8" fill="#d4d4d4"/><rect x="40" y="335.9" width="1" height="11.1" fill="#d4d4d4"/><rect x="40" y="348" width="1" height="11.1" fill="#d4d4d4"/><rect x="40" y="360.1" width="1" height="10.8" fill="#d4d4d4"/><rect x="40" y="371.9" width="1" height="12" fill="#d4d4d4"/><rect x="40" y="384.9" width="1" height="11.2" fill="#d4d4d4"/><rect x="40" y="397.1" width="1" height="10.9" fill="#d4d4d4"/><rect x="40" y="409" width="1" height="11" fill="#d4d4d4"/><rect x="40" y="421" width="1" height="11" fill="#d4d4d4"/><rect x="40" y="433" width="1" height="11" fill="#d4d4d4"/><rect x="40" y="445" width="1" height="11" fill="#d4d4d4"/><rect x="40" y="457" width="1" height="11" fill="#d4d4d4"/><rect x="40" y="469" width="1" height="11" fill="#d4d4d4"/><rect x="40" y="481" width="1" height="11" fill="#d4d4d4"/><rect x="40" y="493" width="1" height="11" fill="#d4d4d4"/><rect x="40" y="505" width="1" height="11" fill="#d4d4d4"/><rect x="40" y="517" width="1" height="11" fill="#d4d4d4"/><rect x="40" y="529" width="1" height="11" fill="#d4d4d4"/><rect x="40" y="541" width="1" height="11" fill="#d4d4d4"/><rect x="40" y="553" width="1" height="11" fill="#d4d4d4"/><rect x="40" y="565" width="1" height="11" fill="#d4d4d4"/><rect x="40" y="577" width="1" height="11" fill="#d4d4d4"/><rect x="40" y="589" width="1" height="11" fill="#d4d4d4"/><rect x="40" y="601" width="1" height="11" fill="#d4d4d4"/><rect x="40" y="613" width="1" height="11" fill="#d4d4d4"/><rect x="40" y="625" width="1" height="11" fill="#d4d4d4"/><rect x="40" y="637" width="1" height="11" fill="#d4d4d4"/><rect x="40" y="649" width="1" height="11" fill="#d4d4d4"/><rect x="40" y="661" width="1" height="11" fill="#d4d4d4"/><rect x="50" y="200" width="1" height="11" fill="#d4d4d4"/><rect x="50" y="212" width="1" height="11" fill="#d4d4d4"/><rect x="50" y="224" width="1" height="12" fill="#d4d4d4"/><rect x="50" y="335.9" width="1" height="11.1" fill="#d4d4d4"/><rect x="50" y="384.9" width="1" height="11.2" fill="#d4d4d4"/><rect x="50" y="409" width="1" height="11" fill="#d4d4d4"/><rect x="50" y="421" width="1" height="11" fill="#d4d4d4"/><rect x="50" y="433" width="1" height="11" fill="#d4d4d4"/><rect x="50" y="445" width="1" height="11" fill="#d4d4d4"/><rect x="50" y="457" width="1" height="11" fill="#d4d4d4"/><rect x="50" y="469" width="1" height="11" fill="#d4d4d4"/><rect x="50" y="481" width="1" height="11" fill="#d4d4d4"/><rect x="50" y="493" width="1" height="11" fill="#d4d4d4"/><rect x="50" y="505" width="1" height="11" fill="#d4d4d4"/><rect x="50" y="517" width="1" height="11" fill="#d4d4d4"/><rect x="50" y="529" width="1" height="11" fill="#d4d4d4"/><rect x="50" y="541" width="1" height="11" fill="#d4d4d4"/><rect x="50" y="553" width="1" height="11" fill="#d4d4d4"/><rect x="50" y="565" width="1" height="11" fill="#d4d4d4"/><rect x="50" y="577" width="1" height="11" fill="#d4d4d4"/><rect x="50" y="589" width="1" height="11" fill="#d4d4d4"/><rect x="50" y="601" width="1" height="11" fill="#d4d4d4"/><rect x="50" y="613" width="1" height="11" fill="#d4d4d4"/><rect x="50" y="625" width="1" height="11" fill="#d4d4d4"/><rect x="50" y="637" width="1" height="11" fill="#d4d4d4"/><rect x="50" y="649" width="1" height="11" fill="#d4d4d4"/><rect x="50" y="661" width="1" height="11" fill="#d4d4d4"/><rect x="244" y="200" width="1" height="11" fill="#d4d4d4"/><rect x="244" y="212" width="1" height="11" fill="#d4d4d4"/><rect x="244" y="224" width="1" height="12" fill="#d4d4d4"/><rect x="244" y="249" width="1" height="11" fill="#d4d4d4"/><rect x="244" y="261" width="1" height="11" fill="#d4d4d4"/><rect x="244" y="273" width="1" height="11.5" fill="#d4d4d4"/><rect x="244" y="285.5" width="1" height="11.5" fill="#d4d4d4"/><rect x="244" y="298" width="1" height="11.8" fill="#d4d4d4"/><rect x="244" y="310.8" width="1" height="11.3" fill="#d4d4d4"/><rect x="244" y="323.1" width="1" height="11.8" fill="#d4d4d4"/><rect x="244" y="335.9" width="1" height="11.1" fill="#d4d4d4"/><rect x="244" y="348" width="1" height="11.1" fill="#d4d4d4"/><rect x="244" y="360.1" width="1" height="10.8" fill="#d4d4d4"/><rect x="244" y="371.9" width="1" height="12" fill="#d4d4d4"/><rect x="244" y="384.9" width="1" height="11.2" fill="#d4d4d4"/><rect x="244" y="397.1" width="1" height="10.9" fill="#d4d4d4"/><rect x="244" y="409" width="1" height="11" fill="#d4d4d4"/><rect x="244" y="421" width="1" height="11" fill="#d4d4d4"/><rect x="244" y="433" width="1" height="11" fill="#d4d4d4"/><rect x="244" y="445" width="1" height="11" fill="#d4d4d4"/><rect x="244" y="457" width="1" height="11" fill="#d4d4d4"/><rect x="244" y="469" width="1" height="11" fill="#d4d4d4"/><rect x="244" y="481" width="1" height="11" fill="#d4d4d4"/><rect x="244" y="493" width="1" height="11" fill="#d4d4d4"/><rect x="244" y="505" width="1" height="11" fill="#d4d4d4"/><rect x="244" y="517" width="1" height="11" fill="#d4d4d4"/><rect x="244" y="529" width="1" height="11" fill="#d4d4d4"/><rect x="244" y="541" width="1" height="11" fill="#d4d4d4"/><rect x="244" y="553" width="1" height="11" fill="#d4d4d4"/><rect x="244" y="565" width="1" height="11" fill="#d4d4d4"/><rect x="244" y="577" width="1" height="11" fill="#d4d4d4"/><rect x="244" y="589" width="1" height="11" fill="#d4d4d4"/><rect x="244" y="601" width="1" height="11" fill="#d4d4d4"/><rect x="244" y="613" width="1" height="11" fill="#d4d4d4"/><rect x="244" y="625" width="1" height="11" fill="#d4d4d4"/><rect x="244" y="637" width="1" height="11" fill="#d4d4d4"/><rect x="244" y="649" width="1" height="11" fill="#d4d4d4"/><rect x="244" y="661" width="1" height="11" fill="#d4d4d4"/><rect x="308" y="200" width="1" height="11" fill="#d4d4d4"/><rect x="308" y="212" width="1" height="11" fill="#d4d4d4"/><rect x="308" y="224" width="1" height="12" fill="#d4d4d4"/><rect x="308" y="249" width="1" height="11" fill="#d4d4d4"/><rect x="308" y="261" width="1" height="11" fill="#d4d4d4"/><rect x="308" y="273" width="1" height="11.5" fill="#d4d4d4"/><rect x="308" y="285.5" width="1" height="11.5" fill="#d4d4d4"/><rect x="308" y="298" width="1" height="11.8" fill="#d4d4d4"/><rect x="308" y="310.8" width="1" height="11.3" fill="#d4d4d4"/><rect x="308" y="323.1" width="1" height="11.8" fill="#d4d4d4"/><rect x="308" y="335.9" width="1" height="11.1" fill="#d4d4d4"/><rect x="308" y="348" width="1" height="11.1" fill="#d4d4d4"/><rect x="308" y="360.1" width="1" height="10.8" fill="#d4d4d4"/><rect x="308" y="371.9" width="1" height="12" fill="#d4d4d4"/><rect x="308" y="384.9" width="1" height="11.2" fill="#d4d4d4"/><rect x="308" y="397.1" width="1" height="10.9" fill="#d4d4d4"/><rect x="308" y="409" width="1" height="11" fill="#d4d4d4"/><rect x="308" y="421" width="1" height="11" fill="#d4d4d4"/><rect x="308" y="433" width="1" height="11" fill="#d4d4d4"/><rect x="308" y="445" width="1" height="11" fill="#d4d4d4"/><rect x="308" y="457" width="1" height="11" fill="#d4d4d4"/><rect x="308" y="469" width="1" height="11" fill="#d4d4d4"/><rect x="308" y="481" width="1" height="11" fill="#d4d4d4"/><rect x="308" y="493" width="1" height="11" fill="#d4d4d4"/><rect x="308" y="505" width="1" height="11" fill="#d4d4d4"/><rect x="308" y="517" width="1" height="11" fill="#d4d4d4"/><rect x="308" y="529" width="1" height="11" fill="#d4d4d4"/><rect x="308" y="541" width="1" height="11" fill="#d4d4d4"/><rect x="308" y="553" width="1" height="11" fill="#d4d4d4"/><rect x="308" y="565" width="1" height="11" fill="#d4d4d4"/><rect x="308" y="577" width="1" height="11" fill="#d4d4d4"/><rect x="308" y="589" width="1" height="11" fill="#d4d4d4"/><rect x="308" y="601" width="1" height="11" fill="#d4d4d4"/><rect x="308" y="613" width="1" height="11" fill="#d4d4d4"/><rect x="308" y="625" width="1" height="11" fill="#d4d4d4"/><rect x="308" y="637" width="1" height="11" fill="#d4d4d4"/><rect x="308" y="649" width="1" height="11" fill="#d4d4d4"/><rect x="308" y="661" width="1" height="11" fill="#d4d4d4"/><rect x="351" y="200" width="1" height="11" fill="#d4d4d4"/><rect x="351" y="212" width="1" height="11" fill="#d4d4d4"/><rect x="351" y="224" width="1" height="12" fill="#d4d4d4"/><rect x="351" y="249" width="1" height="11" fill="#d4d4d4"/><rect x="351" y="261" width="1" height="11" fill="#d4d4d4"/><rect x="351" y="273" width="1" height="11.5" fill="#d4d4d4"/><rect x="351" y="285.5" width="1" height="11.5" fill="#d4d4d4"/><rect x="351" y="298" width="1" height="11.8" fill="#d4d4d4"/><rect x="351" y="310.8" width="1" height="11.3" fill="#d4d4d4"/><rect x="351" y="323.1" width="1" height="11.8" fill="#d4d4d4"/><rect x="351" y="335.9" width="1" height="11.1" fill="#d4d4d4"/><rect x="351" y="348" width="1" height="11.1" fill="#d4d4d4"/><rect x="351" y="360.1" width="1" height="10.8" fill="#d4d4d4"/><rect x="351" y="371.9" width="1" height="12" fill="#d4d4d4"/><rect x="351" y="384.9" width="1" height="11.2" fill="#d4d4d4"/><rect x="351" y="397.1" width="1" height="10.9" fill="#d4d4d4"/><rect x="351" y="409" width="1" height="11" fill="#d4d4d4"/><rect x="351" y="421" width="1" height="11" fill="#d4d4d4"/><rect x="351" y="433" width="1" height="11" fill="#d4d4d4"/><rect x="351" y="445" width="1" height="11" fill="#d4d4d4"/><rect x="351" y="457" width="1" height="11" fill="#d4d4d4"/><rect x="351" y="469" width="1" height="11" fill="#d4d4d4"/><rect x="351" y="481" width="1" height="11" fill="#d4d4d4"/><rect x="351" y="493" width="1" height="11" fill="#d4d4d4"/><rect x="351" y="505" width="1" height="11" fill="#d4d4d4"/><rect x="351" y="517" width="1" height="11" fill="#d4d4d4"/><rect x="351" y="529" width="1" height="11" fill="#d4d4d4"/><rect x="351" y="541" width="1" height="11" fill="#d4d4d4"/><rect x="351" y="553" width="1" height="11" fill="#d4d4d4"/><rect x="351" y="565" width="1" height="11" fill="#d4d4d4"/><rect x="351" y="577" width="1" height="11" fill="#d4d4d4"/><rect x="351" y="589" width="1" height="11" fill="#d4d4d4"/><rect x="351" y="601" width="1" height="11" fill="#d4d4d4"/><rect x="351" y="613" width="1" height="11" fill="#d4d4d4"/><rect x="351" y="625" width="1" height="11" fill="#d4d4d4"/><rect x="351" y="637" width="1" height="11" fill="#d4d4d4"/><rect x="351" y="649" width="1" height="11" fill="#d4d4d4"/><rect x="351" y="661" width="1" height="11" fill="#d4d4d4"/><rect x="394" y="200" width="1" height="11" fill="#d4d4d4"/><rect x="394" y="212" width="1" height="11" fill="#d4d4d4"/><rect x="394" y="224" width="1" height="12" fill="#d4d4d4"/><rect x="394" y="249" width="1" height="11" fill="#d4d4d4"/><rect x="394" y="261" width="1" height="11" fill="#d4d4d4"/><rect x="394" y="273" width="1" height="11.5" fill="#d4d4d4"/><rect x="394" y="285.5" width="1" height="11.5" fill="#d4d4d4"/><rect x="394" y="298" width="1" height="11.8" fill="#d4d4d4"/><rect x="394" y="310.8" width="1" height="11.3" fill="#d4d4d4"/><rect x="394" y="323.1" width="1" height="11.8" fill="#d4d4d4"/><rect x="394" y="335.9" width="1" height="11.1" fill="#d4d4d4"/><rect x="394" y="348" width="1" height="11.1" fill="#d4d4d4"/><rect x="394" y="360.1" width="1" height="10.8" fill="#d4d4d4"/><rect x="394" y="371.9" width="1" height="12" fill="#d4d4d4"/><rect x="394" y="384.9" width="1" height="11.2" fill="#d4d4d4"/><rect x="394" y="397.1" width="1" height="10.9" fill="#d4d4d4"/><rect x="394" y="409" width="1" height="11" fill="#d4d4d4"/><rect x="394" y="421" width="1" height="11" fill="#d4d4d4"/><rect x="394" y="433" width="1" height="11" fill="#d4d4d4"/><rect x="394" y="445" width="1" height="11" fill="#d4d4d4"/><rect x="394" y="457" width="1" height="11" fill="#d4d4d4"/><rect x="394" y="469" width="1" height="11" fill="#d4d4d4"/><rect x="394" y="481" width="1" height="11" fill="#d4d4d4"/><rect x="394" y="493" width="1" height="11" fill="#d4d4d4"/><rect x="394" y="505" width="1" height="11" fill="#d4d4d4"/><rect x="394" y="517" width="1" height="11" fill="#d4d4d4"/><rect x="394" y="529" width="1" height="11" fill="#d4d4d4"/><rect x="394" y="541" width="1" height="11" fill="#d4d4d4"/><rect x="394" y="553" width="1" height="11" fill="#d4d4d4"/><rect x="394" y="565" width="1" height="11" fill="#d4d4d4"/><rect x="394" y="577" width="1" height="11" fill="#d4d4d4"/><rect x="394" y="589" width="1" height="11" fill="#d4d4d4"/><rect x="394" y="601" width="1" height="11" fill="#d4d4d4"/><rect x="394" y="613" width="1" height="11" fill="#d4d4d4"/><rect x="394" y="625" width="1" height="11" fill="#d4d4d4"/><rect x="394" y="637" width="1" height="11" fill="#d4d4d4"/><rect x="394" y="649" width="1" height="11" fill="#d4d4d4"/><rect x="394" y="661" width="1" height="11" fill="#d4d4d4"/><rect x="453" y="200" width="1" height="11" fill="#d4d4d4"/><rect x="453" y="224" width="1" height="12" fill="#d4d4d4"/><rect x="453" y="249" width="1" height="11" fill="#d4d4d4"/><rect x="453" y="261" width="1" height="11" fill="#d4d4d4"/><rect x="453" y="273" width="1" height="11.5" fill="#d4d4d4"/><rect x="453" y="285.5" width="1" height="11.5" fill="#d4d4d4"/><rect x="453" y="298" width="1" height="11.8" fill="#d4d4d4"/><rect x="453" y="310.8" width="1" height="11.3" fill="#d4d4d4"/><rect x="453" y="323.1" width="1" height="11.8" fill="#d4d4d4"/><rect x="453" y="335.9" width="1" height="11.1" fill="#d4d4d4"/><rect x="453" y="348" width="1" height="11.1" fill="#d4d4d4"/><rect x="453" y="360.1" width="1" height="10.8" fill="#d4d4d4"/><rect x="453" y="371.9" width="1" height="12" fill="#d4d4d4"/><rect x="453" y="384.9" width="1" height="11.2" fill="#d4d4d4"/><rect x="453" y="397.1" width="1" height="10.9" fill="#d4d4d4"/><rect x="453" y="409" width="1" height="11" fill="#d4d4d4"/><rect x="453" y="421" width="1" height="11" fill="#d4d4d4"/><rect x="453" y="433" width="1" height="11" fill="#d4d4d4"/><rect x="453" y="445" width="1" height="11" fill="#d4d4d4"/><rect x="453" y="457" width="1" height="11" fill="#d4d4d4"/><rect x="453" y="469" width="1" height="11" fill="#d4d4d4"/><rect x="453" y="481" width="1" height="11" fill="#d4d4d4"/><rect x="453" y="493" width="1" height="11" fill="#d4d4d4"/><rect x="453" y="505" width="1" height="11" fill="#d4d4d4"/><rect x="453" y="517" width="1" height="11" fill="#d4d4d4"/><rect x="453" y="529" width="1" height="11" fill="#d4d4d4"/><rect x="453" y="541" width="1" height="11" fill="#d4d4d4"/><rect x="453" y="553" width="1" height="11" fill="#d4d4d4"/><rect x="453" y="565" width="1" height="11" fill="#d4d4d4"/><rect x="453" y="577" width="1" height="11" fill="#d4d4d4"/><rect x="453" y="589" width="1" height="11" fill="#d4d4d4"/><rect x="453" y="601" width="1" height="11" fill="#d4d4d4"/><rect x="453" y="613" width="1" height="11" fill="#d4d4d4"/><rect x="453" y="625" width="1" height="11" fill="#d4d4d4"/><rect x="453" y="637" width="1" height="11" fill="#d4d4d4"/><rect x="453" y="649" width="1" height="11" fill="#d4d4d4"/><rect x="453" y="661" width="1" height="11" fill="#d4d4d4"/><rect x="513" y="200" width="1" height="11" fill="#d4d4d4"/><rect x="513" y="224" width="1" height="12" fill="#d4d4d4"/><rect x="513" y="249" width="1" height="11" fill="#d4d4d4"/><rect x="513" y="261" width="1" height="11" fill="#d4d4d4"/><rect x="513" y="273" width="1" height="11.5" fill="#d4d4d4"/><rect x="513" y="285.5" width="1" height="11.5" fill="#d4d4d4"/><rect x="513" y="298" width="1" height="11.8" fill="#d4d4d4"/><rect x="513" y="310.8" width="1" height="11.3" fill="#d4d4d4"/><rect x="513" y="323.1" width="1" height="11.8" fill="#d4d4d4"/><rect x="513" y="335.9" width="1" height="11.1" fill="#d4d4d4"/><rect x="513" y="348" width="1" height="11.1" fill="#d4d4d4"/><rect x="513" y="360.1" width="1" height="10.8" fill="#d4d4d4"/><rect x="513" y="371.9" width="1" height="12" fill="#d4d4d4"/><rect x="513" y="384.9" width="1" height="11.2" fill="#d4d4d4"/><rect x="513" y="397.1" width="1" height="10.9" fill="#d4d4d4"/><rect x="513" y="409" width="1" height="11" fill="#d4d4d4"/><rect x="513" y="421" width="1" height="11" fill="#d4d4d4"/><rect x="513" y="433" width="1" height="11" fill="#d4d4d4"/><rect x="513" y="445" width="1" height="11" fill="#d4d4d4"/><rect x="513" y="457" width="1" height="11" fill="#d4d4d4"/><rect x="513" y="469" width="1" height="11" fill="#d4d4d4"/><rect x="513" y="481" width="1" height="11" fill="#d4d4d4"/><rect x="513" y="493" width="1" height="11" fill="#d4d4d4"/><rect x="513" y="505" width="1" height="11" fill="#d4d4d4"/><rect x="513" y="517" width="1" height="11" fill="#d4d4d4"/><rect x="513" y="529" width="1" height="11" fill="#d4d4d4"/><rect x="513" y="541" width="1" height="11" fill="#d4d4d4"/><rect x="513" y="553" width="1" height="11" fill="#d4d4d4"/><rect x="513" y="565" width="1" height="11" fill="#d4d4d4"/><rect x="513" y="577" width="1" height="11" fill="#d4d4d4"/><rect x="513" y="589" width="1" height="11" fill="#d4d4d4"/><rect x="513" y="601" width="1" height="11" fill="#d4d4d4"/><rect x="513" y="613" width="1" height="11" fill="#d4d4d4"/><rect x="513" y="625" width="1" height="11" fill="#d4d4d4"/><rect x="513" y="637" width="1" height="11" fill="#d4d4d4"/><rect x="513" y="649" width="1" height="11" fill="#d4d4d4"/><rect x="513" y="661" width="1" height="11" fill="#d4d4d4"/><rect x="573" y="200" width="1" height="11" fill="#d4d4d4"/><rect x="573" y="224" width="1" height="12" fill="#d4d4d4"/><rect x="573" y="249" width="1" height="11" fill="#d4d4d4"/><rect x="573" y="261" width="1" height="11" fill="#d4d4d4"/><rect x="573" y="273" width="1" height="11.5" fill="#d4d4d4"/><rect x="573" y="285.5" width="1" height="11.5" fill="#d4d4d4"/><rect x="573" y="298" width="1" height="11.8" fill="#d4d4d4"/><rect x="573" y="310.8" width="1" height="11.3" fill="#d4d4d4"/><rect x="573" y="323.1" width="1" height="11.8" fill="#d4d4d4"/><rect x="573" y="335.9" width="1" height="11.1" fill="#d4d4d4"/><rect x="573" y="348" width="1" height="11.1" fill="#d4d4d4"/><rect x="573" y="360.1" width="1" height="10.8" fill="#d4d4d4"/><rect x="573" y="371.9" width="1" height="12" fill="#d4d4d4"/><rect x="573" y="384.9" width="1" height="11.2" fill="#d4d4d4"/><rect x="573" y="397.1" width="1" height="10.9" fill="#d4d4d4"/><rect x="573" y="409" width="1" height="11" fill="#d4d4d4"/><rect x="573" y="421" width="1" height="11" fill="#d4d4d4"/><rect x="573" y="433" width="1" height="11" fill="#d4d4d4"/><rect x="573" y="445" width="1" height="11" fill="#d4d4d4"/><rect x="573" y="457" width="1" height="11" fill="#d4d4d4"/><rect x="573" y="469" width="1" height="11" fill="#d4d4d4"/><rect x="573" y="481" width="1" height="11" fill="#d4d4d4"/><rect x="573" y="493" width="1" height="11" fill="#d4d4d4"/><rect x="573" y="505" width="1" height="11" fill="#d4d4d4"/><rect x="573" y="517" width="1" height="11" fill="#d4d4d4"/><rect x="573" y="529" width="1" height="11" fill="#d4d4d4"/><rect x="573" y="541" width="1" height="11" fill="#d4d4d4"/><rect x="573" y="553" width="1" height="11" fill="#d4d4d4"/><rect x="573" y="565" width="1" height="11" fill="#d4d4d4"/><rect x="573" y="577" width="1" height="11" fill="#d4d4d4"/><rect x="573" y="589" width="1" height="11" fill="#d4d4d4"/><rect x="573" y="601" width="1" height="11" fill="#d4d4d4"/><rect x="573" y="613" width="1" height="11" fill="#d4d4d4"/><rect x="573" y="625" width="1" height="11" fill="#d4d4d4"/><rect x="573" y="637" width="1" height="11" fill="#d4d4d4"/><rect x="573" y="649" width="1" height="11" fill="#d4d4d4"/><rect x="573" y="661" width="1" height="11" fill="#d4d4d4"/><rect x="633" y="200" width="1" height="11" fill="#d4d4d4"/><rect x="633" y="224" width="1" height="12" fill="#d4d4d4"/><rect x="633" y="249" width="1" height="11" fill="#d4d4d4"/><rect x="633" y="261" width="1" height="11" fill="#d4d4d4"/><rect x="633" y="273" width="1" height="11.5" fill="#d4d4d4"/><rect x="633" y="285.5" width="1" height="11.5" fill="#d4d4d4"/><rect x="633" y="298" width="1" height="11.8" fill="#d4d4d4"/><rect x="633" y="310.8" width="1" height="11.3" fill="#d4d4d4"/><rect x="633" y="323.1" width="1" height="11.8" fill="#d4d4d4"/><rect x="633" y="335.9" width="1" height="11.1" fill="#d4d4d4"/><rect x="633" y="348" width="1" height="11.1" fill="#d4d4d4"/><rect x="633" y="360.1" width="1" height="10.8" fill="#d4d4d4"/><rect x="633" y="371.9" width="1" height="12" fill="#d4d4d4"/><rect x="633" y="384.9" width="1" height="11.2" fill="#d4d4d4"/><rect x="633" y="397.1" width="1" height="10.9" fill="#d4d4d4"/><rect x="633" y="409" width="1" height="11" fill="#d4d4d4"/><rect x="633" y="421" width="1" height="11" fill="#d4d4d4"/><rect x="633" y="433" width="1" height="11" fill="#d4d4d4"/><rect x="633" y="445" width="1" height="11" fill="#d4d4d4"/><rect x="633" y="457" width="1" height="11" fill="#d4d4d4"/><rect x="633" y="469" width="1" height="11" fill="#d4d4d4"/><rect x="633" y="481" width="1" height="11" fill="#d4d4d4"/><rect x="633" y="493" width="1" height="11" fill="#d4d4d4"/><rect x="633" y="505" width="1" height="11" fill="#d4d4d4"/><rect x="633" y="517" width="1" height="11" fill="#d4d4d4"/><rect x="633" y="529" width="1" height="11" fill="#d4d4d4"/><rect x="633" y="541" width="1" height="11" fill="#d4d4d4"/><rect x="633" y="553" width="1" height="11" fill="#d4d4d4"/><rect x="633" y="565" width="1" height="11" fill="#d4d4d4"/><rect x="633" y="577" width="1" height="11" fill="#d4d4d4"/><rect x="633" y="589" width="1" height="11" fill="#d4d4d4"/><rect x="633" y="601" width="1" height="11" fill="#d4d4d4"/><rect x="633" y="613" width="1" height="11" fill="#d4d4d4"/><rect x="633" y="625" width="1" height="11" fill="#d4d4d4"/><rect x="633" y="637" width="1" height="11" fill="#d4d4d4"/><rect x="633" y="649" width="1" height="11" fill="#d4d4d4"/><rect x="633" y="661" width="1" height="11" fill="#d4d4d4"/><rect x="693" y="200" width="1" height="11" fill="#d4d4d4"/><rect x="693" y="224" width="1" height="12" fill="#d4d4d4"/><rect x="693" y="249" width="1" height="11" fill="#d4d4d4"/><rect x="693" y="261" width="1" height="11" fill="#d4d4d4"/><rect x="693" y="273" width="1" height="11.5" fill="#d4d4d4"/><rect x="693" y="285.5" width="1" height="11.5" fill="#d4d4d4"/><rect x="693" y="298" width="1" height="11.8" fill="#d4d4d4"/><rect x="693" y="310.8" width="1" height="11.3" fill="#d4d4d4"/><rect x="693" y="323.1" width="1" height="11.8" fill="#d4d4d4"/><rect x="693" y="335.9" width="1" height="11.1" fill="#d4d4d4"/><rect x="693" y="348" width="1" height="11.1" fill="#d4d4d4"/><rect x="693" y="360.1" width="1" height="10.8" fill="#d4d4d4"/><rect x="693" y="371.9" width="1" height="12" fill="#d4d4d4"/><rect x="693" y="384.9" width="1" height="11.2" fill="#d4d4d4"/><rect x="693" y="397.1" width="1" height="10.9" fill="#d4d4d4"/><rect x="693" y="409" width="1" height="11" fill="#d4d4d4"/><rect x="693" y="421" width="1" height="11" fill="#d4d4d4"/><rect x="693" y="433" width="1" height="11" fill="#d4d4d4"/><rect x="693" y="445" width="1" height="11" fill="#d4d4d4"/><rect x="693" y="457" width="1" height="11" fill="#d4d4d4"/><rect x="693" y="469" width="1" height="11" fill="#d4d4d4"/><rect x="693" y="481" width="1" height="11" fill="#d4d4d4"/><rect x="693" y="493" width="1" height="11" fill="#d4d4d4"/><rect x="693" y="505" width="1" height="11" fill="#d4d4d4"/><rect x="693" y="517" width="1" height="11" fill="#d4d4d4"/><rect x="693" y="529" width="1" height="11" fill="#d4d4d4"/><rect x="693" y="541" width="1" height="11" fill="#d4d4d4"/><rect x="693" y="553" width="1" height="11" fill="#d4d4d4"/><rect x="693" y="565" width="1" height="11" fill="#d4d4d4"/><rect x="693" y="577" width="1" height="11" fill="#d4d4d4"/><rect x="693" y="589" width="1" height="11" fill="#d4d4d4"/><rect x="693" y="601" width="1" height="11" fill="#d4d4d4"/><rect x="693" y="613" width="1" height="11" fill="#d4d4d4"/><rect x="693" y="625" width="1" height="11" fill="#d4d4d4"/><rect x="693" y="637" width="1" height="11" fill="#d4d4d4"/><rect x="693" y="649" width="1" height="11" fill="#d4d4d4"/><rect x="693" y="661" width="1" height="11" fill="#d4d4d4"/><rect x="753" y="200" width="1" height="11" fill="#d4d4d4"/><rect x="753" y="224" width="1" height="12" fill="#d4d4d4"/><rect x="753" y="249" width="1" height="11" fill="#d4d4d4"/><rect x="753" y="261" width="1" height="11" fill="#d4d4d4"/><rect x="753" y="273" width="1" height="11.5" fill="#d4d4d4"/><rect x="753" y="285.5" width="1" height="11.5" fill="#d4d4d4"/><rect x="753" y="298" width="1" height="11.8" fill="#d4d4d4"/><rect x="753" y="310.8" width="1" height="11.3" fill="#d4d4d4"/><rect x="753" y="323.1" width="1" height="11.8" fill="#d4d4d4"/><rect x="753" y="335.9" width="1" height="11.1" fill="#d4d4d4"/><rect x="753" y="348" width="1" height="11.1" fill="#d4d4d4"/><rect x="753" y="360.1" width="1" height="10.8" fill="#d4d4d4"/><rect x="753" y="371.9" width="1" height="12" fill="#d4d4d4"/><rect x="753" y="384.9" width="1" height="11.2" fill="#d4d4d4"/><rect x="753" y="397.1" width="1" height="10.9" fill="#d4d4d4"/><rect x="753" y="409" width="1" height="11" fill="#d4d4d4"/><rect x="753" y="421" width="1" height="11" fill="#d4d4d4"/><rect x="753" y="433" width="1" height="11" fill="#d4d4d4"/><rect x="753" y="445" width="1" height="11" fill="#d4d4d4"/><rect x="753" y="457" width="1" height="11" fill="#d4d4d4"/><rect x="753" y="469" width="1" height="11" fill="#d4d4d4"/><rect x="753" y="481" width="1" height="11" fill="#d4d4d4"/><rect x="753" y="493" width="1" height="11" fill="#d4d4d4"/><rect x="753" y="505" width="1" height="11" fill="#d4d4d4"/><rect x="753" y="517" width="1" height="11" fill="#d4d4d4"/><rect x="753" y="529" width="1" height="11" fill="#d4d4d4"/><rect x="753" y="541" width="1" height="11" fill="#d4d4d4"/><rect x="753" y="553" width="1" height="11" fill="#d4d4d4"/><rect x="753" y="565" width="1" height="11" fill="#d4d4d4"/><rect x="753" y="577" width="1" height="11" fill="#d4d4d4"/><rect x="753" y="589" width="1" height="11" fill="#d4d4d4"/><rect x="753" y="601" width="1" height="11" fill="#d4d4d4"/><rect x="753" y="613" width="1" height="11" fill="#d4d4d4"/><rect x="753" y="625" width="1" height="11" fill="#d4d4d4"/><rect x="753" y="637" width="1" height="11" fill="#d4d4d4"/><rect x="753" y="649" width="1" height="11" fill="#d4d4d4"/><rect x="753" y="661" width="1" height="11" fill="#d4d4d4"/><rect x="813" y="200" width="1" height="11" fill="#d4d4d4"/><rect x="813" y="224" width="1" height="12" fill="#d4d4d4"/><rect x="813" y="249" width="1" height="11" fill="#d4d4d4"/><rect x="813" y="261" width="1" height="11" fill="#d4d4d4"/><rect x="813" y="273" width="1" height="11.5" fill="#d4d4d4"/><rect x="813" y="285.5" width="1" height="11.5" fill="#d4d4d4"/><rect x="813" y="298" width="1" height="11.8" fill="#d4d4d4"/><rect x="813" y="310.8" width="1" height="11.3" fill="#d4d4d4"/><rect x="813" y="323.1" width="1" height="11.8" fill="#d4d4d4"/><rect x="813" y="335.9" width="1" height="11.1" fill="#d4d4d4"/><rect x="813" y="348" width="1" height="11.1" fill="#d4d4d4"/><rect x="813" y="360.1" width="1" height="10.8" fill="#d4d4d4"/><rect x="813" y="371.9" width="1" height="12" fill="#d4d4d4"/><rect x="813" y="384.9" width="1" height="11.2" fill="#d4d4d4"/><rect x="813" y="397.1" width="1" height="10.9" fill="#d4d4d4"/><rect x="813" y="409" width="1" height="11" fill="#d4d4d4"/><rect x="813" y="421" width="1" height="11" fill="#d4d4d4"/><rect x="813" y="433" width="1" height="11" fill="#d4d4d4"/><rect x="813" y="445" width="1" height="11" fill="#d4d4d4"/><rect x="813" y="457" width="1" height="11" fill="#d4d4d4"/><rect x="813" y="469" width="1" height="11" fill="#d4d4d4"/><rect x="813" y="481" width="1" height="11" fill="#d4d4d4"/><rect x="813" y="493" width="1" height="11" fill="#d4d4d4"/><rect x="813" y="505" width="1" height="11" fill="#d4d4d4"/><rect x="813" y="517" width="1" height="11" fill="#d4d4d4"/><rect x="813" y="529" width="1" height="11" fill="#d4d4d4"/><rect x="813" y="541" width="1" height="11" fill="#d4d4d4"/><rect x="813" y="553" width="1" height="11" fill="#d4d4d4"/><rect x="813" y="565" width="1" height="11" fill="#d4d4d4"/><rect x="813" y="577" width="1" height="11" fill="#d4d4d4"/><rect x="813" y="589" width="1" height="11" fill="#d4d4d4"/><rect x="813" y="601" width="1" height="11" fill="#d4d4d4"/><rect x="813" y="613" width="1" height="11" fill="#d4d4d4"/><rect x="813" y="625" width="1" height="11" fill="#d4d4d4"/><rect x="813" y="637" width="1" height="11" fill="#d4d4d4"/><rect x="813" y="649" width="1" height="11" fill="#d4d4d4"/><rect x="813" y="661" width="1" height="11" fill="#d4d4d4"/><rect x="873" y="200" width="1" height="11" fill="#d4d4d4"/><rect x="873" y="224" width="1" height="12" fill="#d4d4d4"/><rect x="873" y="249" width="1" height="11" fill="#d4d4d4"/><rect x="873" y="261" width="1" height="11" fill="#d4d4d4"/><rect x="873" y="273" width="1" height="11.5" fill="#d4d4d4"/><rect x="873" y="285.5" width="1" height="11.5" fill="#d4d4d4"/><rect x="873" y="298" width="1" height="11.8" fill="#d4d4d4"/><rect x="873" y="310.8" width="1" height="11.3" fill="#d4d4d4"/><rect x="873" y="323.1" width="1" height="11.8" fill="#d4d4d4"/><rect x="873" y="335.9" width="1" height="11.1" fill="#d4d4d4"/><rect x="873" y="348" width="1" height="11.1" fill="#d4d4d4"/><rect x="873" y="360.1" width="1" height="10.8" fill="#d4d4d4"/><rect x="873" y="371.9" width="1" height="12" fill="#d4d4d4"/><rect x="873" y="384.9" width="1" height="11.2" fill="#d4d4d4"/><rect x="873" y="397.1" width="1" height="10.9" fill="#d4d4d4"/><rect x="873" y="409" width="1" height="11" fill="#d4d4d4"/><rect x="873" y="421" width="1" height="11" fill="#d4d4d4"/><rect x="873" y="433" width="1" height="11" fill="#d4d4d4"/><rect x="873" y="445" width="1" height="11" fill="#d4d4d4"/><rect x="873" y="457" width="1" height="11" fill="#d4d4d4"/><rect x="873" y="469" width="1" height="11" fill="#d4d4d4"/><rect x="873" y="481" width="1" height="11" fill="#d4d4d4"/><rect x="873" y="493" width="1" height="11" fill="#d4d4d4"/><rect x="873" y="505" width="1" height="11" fill="#d4d4d4"/><rect x="873" y="517" width="1" height="11" fill="#d4d4d4"/><rect x="873" y="529" width="1" height="11" fill="#d4d4d4"/><rect x="873" y="541" width="1" height="11" fill="#d4d4d4"/><rect x="873" y="553" width="1" height="11" fill="#d4d4d4"/><rect x="873" y="565" width="1" height="11" fill="#d4d4d4"/><rect x="873" y="577" width="1" height="11" fill="#d4d4d4"/><rect x="873" y="589" width="1" height="11" fill="#d4d4d4"/><rect x="873" y="601" width="1" height="11" fill="#d4d4d4"/><rect x="873" y="613" width="1" height="11" fill="#d4d4d4"/><rect x="873" y="625" width="1" height="11" fill="#d4d4d4"/><rect x="873" y="637" width="1" height="11" fill="#d4d4d4"/><rect x="873" y="649" width="1" height="11" fill="#d4d4d4"/><rect x="873" y="661" width="1" height="11" fill="#d4d4d4"/><rect x="933" y="200" width="1" height="11" fill="#d4d4d4"/><rect x="933" y="224" width="1" height="12" fill="#d4d4d4"/><rect x="933" y="249" width="1" height="11" fill="#d4d4d4"/><rect x="933" y="261" width="1" height="11" fill="#d4d4d4"/><rect x="933" y="273" width="1" height="11.5" fill="#d4d4d4"/><rect x="933" y="285.5" width="1" height="11.5" fill="#d4d4d4"/><rect x="933" y="298" width="1" height="11.8" fill="#d4d4d4"/><rect x="933" y="310.8" width="1" height="11.3" fill="#d4d4d4"/><rect x="933" y="323.1" width="1" height="11.8" fill="#d4d4d4"/><rect x="933" y="335.9" width="1" height="11.1" fill="#d4d4d4"/><rect x="933" y="348" width="1" height="11.1" fill="#d4d4d4"/><rect x="933" y="360.1" width="1" height="10.8" fill="#d4d4d4"/><rect x="933" y="371.9" width="1" height="12" fill="#d4d4d4"/><rect x="933" y="384.9" width="1" height="11.2" fill="#d4d4d4"/><rect x="933" y="397.1" width="1" height="10.9" fill="#d4d4d4"/><rect x="933" y="409" width="1" height="11" fill="#d4d4d4"/><rect x="933" y="421" width="1" height="11" fill="#d4d4d4"/><rect x="933" y="433" width="1" height="11" fill="#d4d4d4"/><rect x="933" y="445" width="1" height="11" fill="#d4d4d4"/><rect x="933" y="457" width="1" height="11" fill="#d4d4d4"/><rect x="933" y="469" width="1" height="11" fill="#d4d4d4"/><rect x="933" y="481" width="1" height="11" fill="#d4d4d4"/><rect x="933" y="493" width="1" height="11" fill="#d4d4d4"/><rect x="933" y="505" width="1" height="11" fill="#d4d4d4"/><rect x="933" y="517" width="1" height="11" fill="#d4d4d4"/><rect x="933" y="529" width="1" height="11" fill="#d4d4d4"/><rect x="933" y="541" width="1" height="11" fill="#d4d4d4"/><rect x="933" y="553" width="1" height="11" fill="#d4d4d4"/><rect x="933" y="565" width="1" height="11" fill="#d4d4d4"/><rect x="933" y="577" width="1" height="11" fill="#d4d4d4"/><rect x="933" y="589" width="1" height="11" fill="#d4d4d4"/><rect x="933" y="601" width="1" height="11" fill="#d4d4d4"/><rect x="933" y="613" width="1" height="11" fill="#d4d4d4"/><rect x="933" y="625" width="1" height="11" fill="#d4d4d4"/><rect x="933" y="637" width="1" height="11" fill="#d4d4d4"/><rect x="933" y="649" width="1" height="11" fill="#d4d4d4"/><rect x="933" y="661" width="1" height="11" fill="#d4d4d4"/><rect x="993" y="200" width="1" height="11" fill="#d4d4d4"/><rect x="993" y="224" width="1" height="12" fill="#d4d4d4"/><rect x="993" y="249" width="1" height="11" fill="#d4d4d4"/><rect x="993" y="261" width="1" height="11" fill="#d4d4d4"/><rect x="993" y="273" width="1" height="11.5" fill="#d4d4d4"/><rect x="993" y="285.5" width="1" height="11.5" fill="#d4d4d4"/><rect x="993" y="298" width="1" height="11.8" fill="#d4d4d4"/><rect x="993" y="310.8" width="1" height="11.3" fill="#d4d4d4"/><rect x="993" y="323.1" width="1" height="11.8" fill="#d4d4d4"/><rect x="993" y="335.9" width="1" height="11.1" fill="#d4d4d4"/><rect x="993" y="348" width="1" height="11.1" fill="#d4d4d4"/><rect x="993" y="360.1" width="1" height="10.8" fill="#d4d4d4"/><rect x="993" y="371.9" width="1" height="12" fill="#d4d4d4"/><rect x="993" y="384.9" width="1" height="11.2" fill="#d4d4d4"/><rect x="993" y="397.1" width="1" height="10.9" fill="#d4d4d4"/><rect x="993" y="409" width="1" height="11" fill="#d4d4d4"/><rect x="993" y="421" width="1" height="11" fill="#d4d4d4"/><rect x="993" y="433" width="1" height="11" fill="#d4d4d4"/><rect x="993" y="445" width="1" height="11" fill="#d4d4d4"/><rect x="993" y="457" width="1" height="11" fill="#d4d4d4"/><rect x="993" y="469" width="1" height="11" fill="#d4d4d4"/><rect x="993" y="481" width="1" height="11" fill="#d4d4d4"/><rect x="993" y="493" width="1" height="11" fill="#d4d4d4"/><rect x="993" y="505" width="1" height="11" fill="#d4d4d4"/><rect x="993" y="517" width="1" height="11" fill="#d4d4d4"/><rect x="993" y="529" width="1" height="11" fill="#d4d4d4"/><rect x="993" y="541" width="1" height="11" fill="#d4d4d4"/><rect x="993" y="553" width="1" height="11" fill="#d4d4d4"/><rect x="993" y="565" width="1" height="11" fill="#d4d4d4"/><rect x="993" y="577" width="1" height="11" fill="#d4d4d4"/><rect x="993" y="589" width="1" height="11" fill="#d4d4d4"/><rect x="993" y="601" width="1" height="11" fill="#d4d4d4"/><rect x="993" y="613" width="1" height="11" fill="#d4d4d4"/><rect x="993" y="625" width="1" height="11" fill="#d4d4d4"/><rect x="993" y="637" width="1" height="11" fill="#d4d4d4"/><rect x="993" y="649" width="1" height="11" fill="#d4d4d4"/><rect x="993" y="661" width="1" height="11" fill="#d4d4d4"/><rect x="1053" y="200" width="1" height="11" fill="#d4d4d4"/><rect x="1053" y="224" width="1" height="12" fill="#d4d4d4"/><rect x="1053" y="249" width="1" height="11" fill="#d4d4d4"/><rect x="1053" y="261" width="1" height="11" fill="#d4d4d4"/><rect x="1053" y="273" width="1" height="11.5" fill="#d4d4d4"/><rect x="1053" y="285.5" width="1" height="11.5" fill="#d4d4d4"/><rect x="1053" y="298" width="1" height="11.8" fill="#d4d4d4"/><rect x="1053" y="310.8" width="1" height="11.3" fill="#d4d4d4"/><rect x="1053" y="323.1" width="1" height="11.8" fill="#d4d4d4"/><rect x="1053" y="335.9" width="1" height="11.1" fill="#d4d4d4"/><rect x="1053" y="348" width="1" height="11.1" fill="#d4d4d4"/><rect x="1053" y="360.1" width="1" height="10.8" fill="#d4d4d4"/><rect x="1053" y="371.9" width="1" height="12" fill="#d4d4d4"/><rect x="1053" y="384.9" width="1" height="11.2" fill="#d4d4d4"/><rect x="1053" y="397.1" width="1" height="10.9" fill="#d4d4d4"/><rect x="1053" y="409" width="1" height="11" fill="#d4d4d4"/><rect x="1053" y="421" width="1" height="11" fill="#d4d4d4"/><rect x="1053" y="433" width="1" height="11" fill="#d4d4d4"/><rect x="1053" y="445" width="1" height="11" fill="#d4d4d4"/><rect x="1053" y="457" width="1" height="11" fill="#d4d4d4"/><rect x="1053" y="469" width="1" height="11" fill="#d4d4d4"/><rect x="1053" y="481" width="1" height="11" fill="#d4d4d4"/><rect x="1053" y="493" width="1" height="11" fill="#d4d4d4"/><rect x="1053" y="505" width="1" height="11" fill="#d4d4d4"/><rect x="1053" y="517" width="1" height="11" fill="#d4d4d4"/><rect x="1053" y="529" width="1" height="11" fill="#d4d4d4"/><rect x="1053" y="541" width="1" height="11" fill="#d4d4d4"/><rect x="1053" y="553" width="1" height="11" fill="#d4d4d4"/><rect x="1053" y="565" width="1" height="11" fill="#d4d4d4"/><rect x="1053" y="577" width="1" height="11" fill="#d4d4d4"/><rect x="1053" y="589" width="1" height="11" fill="#d4d4d4"/><rect x="1053" y="601" width="1" height="11" fill="#d4d4d4"/><rect x="1053" y="613" width="1" height="11" fill="#d4d4d4"/><rect x="1053" y="625" width="1" height="11" fill="#d4d4d4"/><rect x="1053" y="637" width="1" height="11" fill="#d4d4d4"/><rect x="1053" y="649" width="1" height="11" fill="#d4d4d4"/><rect x="1053" y="661" width="1" height="11" fill="#d4d4d4"/><rect x="1113" y="200" width="1" height="11" fill="#d4d4d4"/><rect x="1113" y="224" width="1" height="12" fill="#d4d4d4"/><rect x="1113" y="249" width="1" height="11" fill="#d4d4d4"/><rect x="1113" y="261" width="1" height="11" fill="#d4d4d4"/><rect x="1113" y="273" width="1" height="11.5" fill="#d4d4d4"/><rect x="1113" y="285.5" width="1" height="11.5" fill="#d4d4d4"/><rect x="1113" y="298" width="1" height="11.8" fill="#d4d4d4"/><rect x="1113" y="310.8" width="1" height="11.3" fill="#d4d4d4"/><rect x="1113" y="323.1" width="1" height="11.8" fill="#d4d4d4"/><rect x="1113" y="335.9" width="1" height="11.1" fill="#d4d4d4"/><rect x="1113" y="348" width="1" height="11.1" fill="#d4d4d4"/><rect x="1113" y="360.1" width="1" height="10.8" fill="#d4d4d4"/><rect x="1113" y="371.9" width="1" height="12" fill="#d4d4d4"/><rect x="1113" y="384.9" width="1" height="11.2" fill="#d4d4d4"/><rect x="1113" y="397.1" width="1" height="10.9" fill="#d4d4d4"/><rect x="1113" y="409" width="1" height="11" fill="#d4d4d4"/><rect x="1113" y="421" width="1" height="11" fill="#d4d4d4"/><rect x="1113" y="433" width="1" height="11" fill="#d4d4d4"/><rect x="1113" y="445" width="1" height="11" fill="#d4d4d4"/><rect x="1113" y="457" width="1" height="11" fill="#d4d4d4"/><rect x="1113" y="469" width="1" height="11" fill="#d4d4d4"/><rect x="1113" y="481" width="1" height="11" fill="#d4d4d4"/><rect x="1113" y="493" width="1" height="11" fill="#d4d4d4"/><rect x="1113" y="505" width="1" height="11" fill="#d4d4d4"/><rect x="1113" y="517" width="1" height="11" fill="#d4d4d4"/><rect x="1113" y="529" width="1" height="11" fill="#d4d4d4"/><rect x="1113" y="541" width="1" height="11" fill="#d4d4d4"/><rect x="1113" y="553" width="1" height="11" fill="#d4d4d4"/><rect x="1113" y="565" width="1" height="11" fill="#d4d4d4"/><rect x="1113" y="577" width="1" height="11" fill="#d4d4d4"/><rect x="1113" y="589" width="1" height="11" fill="#d4d4d4"/><rect x="1113" y="601" width="1" height="11" fill="#d4d4d4"/><rect x="1113" y="613" width="1" height="11" fill="#d4d4d4"/><rect x="1113" y="625" width="1" height="11" fill="#d4d4d4"/><rect x="1113" y="637" width="1" height="11" fill="#d4d4d4"/><rect x="1113" y="649" width="1" height="11" fill="#d4d4d4"/><rect x="1113" y="661" width="1" height="11" fill="#d4d4d4"/><rect x="1173" y="200" width="1" height="11" fill="#d4d4d4"/><rect x="1173" y="224" width="1" height="12" fill="#d4d4d4"/><rect x="1173" y="249" width="1" height="11" fill="#d4d4d4"/><rect x="1173" y="261" width="1" height="11" fill="#d4d4d4"/><rect x="1173" y="273" width="1" height="11.5" fill="#d4d4d4"/><rect x="1173" y="285.5" width="1" height="11.5" fill="#d4d4d4"/><rect x="1173" y="298" width="1" height="11.8" fill="#d4d4d4"/><rect x="1173" y="310.8" width="1" height="11.3" fill="#d4d4d4"/><rect x="1173" y="323.1" width="1" height="11.8" fill="#d4d4d4"/><rect x="1173" y="335.9" width="1" height="11.1" fill="#d4d4d4"/><rect x="1173" y="348" width="1" height="11.1" fill="#d4d4d4"/><rect x="1173" y="360.1" width="1" height="10.8" fill="#d4d4d4"/><rect x="1173" y="371.9" width="1" height="12" fill="#d4d4d4"/><rect x="1173" y="384.9" width="1" height="11.2" fill="#d4d4d4"/><rect x="1173" y="397.1" width="1" height="10.9" fill="#d4d4d4"/><rect x="1173" y="409" width="1" height="11" fill="#d4d4d4"/><rect x="1173" y="421" width="1" height="11" fill="#d4d4d4"/><rect x="1173" y="433" width="1" height="11" fill="#d4d4d4"/><rect x="1173" y="445" width="1" height="11" fill="#d4d4d4"/><rect x="1173" y="457" width="1" height="11" fill="#d4d4d4"/><rect x="1173" y="469" width="1" height="11" fill="#d4d4d4"/><rect x="1173" y="481" width="1" height="11" fill="#d4d4d4"/><rect x="1173" y="493" width="1" height="11" fill="#d4d4d4"/><rect x="1173" y="505" width="1" height="11" fill="#d4d4d4"/><rect x="1173" y="517" width="1" height="11" fill="#d4d4d4"/><rect x="1173" y="529" width="1" height="11" fill="#d4d4d4"/><rect x="1173" y="541" width="1" height="11" fill="#d4d4d4"/><rect x="1173" y="553" width="1" height="11" fill="#d4d4d4"/><rect x="1173" y="565" width="1" height="11" fill="#d4d4d4"/><rect x="1173" y="577" width="1" height="11" fill="#d4d4d4"/><rect x="1173" y="589" width="1" height="11" fill="#d4d4d4"/><rect x="1173" y="601" width="1" height="11" fill="#d4d4d4"/><rect x="1173" y="613" width="1" height="11" fill="#d4d4d4"/><rect x="1173" y="625" width="1" height="11" fill="#d4d4d4"/><rect x="1173" y="637" width="1" height="11" fill="#d4d4d4"/><rect x="1173" y="649" width="1" height="11" fill="#d4d4d4"/><rect x="1173" y="661" width="1" height="11" fill="#d4d4d4"/><rect x="1233" y="200" width="1" height="11" fill="#d4d4d4"/><rect x="1233" y="224" width="1" height="12" fill="#d4d4d4"/><rect x="1233" y="249" width="1" height="11" fill="#d4d4d4"/><rect x="1233" y="261" width="1" height="11" fill="#d4d4d4"/><rect x="1233" y="273" width="1" height="11.5" fill="#d4d4d4"/><rect x="1233" y="285.5" width="1" height="11.5" fill="#d4d4d4"/><rect x="1233" y="298" width="1" height="11.8" fill="#d4d4d4"/><rect x="1233" y="310.8" width="1" height="11.3" fill="#d4d4d4"/><rect x="1233" y="323.1" width="1" height="11.8" fill="#d4d4d4"/><rect x="1233" y="335.9" width="1" height="11.1" fill="#d4d4d4"/><rect x="1233" y="348" width="1" height="11.1" fill="#d4d4d4"/><rect x="1233" y="360.1" width="1" height="10.8" fill="#d4d4d4"/><rect x="1233" y="371.9" width="1" height="12" fill="#d4d4d4"/><rect x="1233" y="384.9" width="1" height="11.2" fill="#d4d4d4"/><rect x="1233" y="397.1" width="1" height="10.9" fill="#d4d4d4"/><rect x="1233" y="409" width="1" height="11" fill="#d4d4d4"/><rect x="1233" y="421" width="1" height="11" fill="#d4d4d4"/><rect x="1233" y="433" width="1" height="11" fill="#d4d4d4"/><rect x="1233" y="445" width="1" height="11" fill="#d4d4d4"/><rect x="1233" y="457" width="1" height="11" fill="#d4d4d4"/><rect x="1233" y="469" width="1" height="11" fill="#d4d4d4"/><rect x="1233" y="481" width="1" height="11" fill="#d4d4d4"/><rect x="1233" y="493" width="1" height="11" fill="#d4d4d4"/><rect x="1233" y="505" width="1" height="11" fill="#d4d4d4"/><rect x="1233" y="517" width="1" height="11" fill="#d4d4d4"/><rect x="1233" y="529" width="1" height="11" fill="#d4d4d4"/><rect x="1233" y="541" width="1" height="11" fill="#d4d4d4"/><rect x="1233" y="553" width="1" height="11" fill="#d4d4d4"/><rect x="1233" y="565" width="1" height="11" fill="#d4d4d4"/><rect x="1233" y="577" width="1" height="11" fill="#d4d4d4"/><rect x="1233" y="589" width="1" height="11" fill="#d4d4d4"/><rect x="1233" y="601" width="1" height="11" fill="#d4d4d4"/><rect x="1233" y="613" width="1" height="11" fill="#d4d4d4"/><rect x="1233" y="625" width="1" height="11" fill="#d4d4d4"/><rect x="1233" y="637" width="1" height="11" fill="#d4d4d4"/><rect x="1233" y="649" width="1" height="11" fill="#d4d4d4"/><rect x="1233" y="661" width="1" height="11" fill="#d4d4d4"/><rect x="1293" y="200" width="1" height="11" fill="#d4d4d4"/><rect x="1293" y="224" width="1" height="12" fill="#d4d4d4"/><rect x="1293" y="249" width="1" height="11" fill="#d4d4d4"/><rect x="1293" y="261" width="1" height="11" fill="#d4d4d4"/><rect x="1293" y="273" width="1" height="11.5" fill="#d4d4d4"/><rect x="1293" y="285.5" width="1" height="11.5" fill="#d4d4d4"/><rect x="1293" y="298" width="1" height="11.8" fill="#d4d4d4"/><rect x="1293" y="310.8" width="1" height="11.3" fill="#d4d4d4"/><rect x="1293" y="323.1" width="1" height="11.8" fill="#d4d4d4"/><rect x="1293" y="335.9" width="1" height="11.1" fill="#d4d4d4"/><rect x="1293" y="348" width="1" height="11.1" fill="#d4d4d4"/><rect x="1293" y="360.1" width="1" height="10.8" fill="#d4d4d4"/><rect x="1293" y="371.9" width="1" height="12" fill="#d4d4d4"/><rect x="1293" y="384.9" width="1" height="11.2" fill="#d4d4d4"/><rect x="1293" y="397.1" width="1" height="10.9" fill="#d4d4d4"/><rect x="1293" y="409" width="1" height="11" fill="#d4d4d4"/><rect x="1293" y="421" width="1" height="11" fill="#d4d4d4"/><rect x="1293" y="433" width="1" height="11" fill="#d4d4d4"/><rect x="1293" y="445" width="1" height="11" fill="#d4d4d4"/><rect x="1293" y="457" width="1" height="11" fill="#d4d4d4"/><rect x="1293" y="469" width="1" height="11" fill="#d4d4d4"/><rect x="1293" y="481" width="1" height="11" fill="#d4d4d4"/><rect x="1293" y="493" width="1" height="11" fill="#d4d4d4"/><rect x="1293" y="505" width="1" height="11" fill="#d4d4d4"/><rect x="1293" y="517" width="1" height="11" fill="#d4d4d4"/><rect x="1293" y="529" width="1" height="11" fill="#d4d4d4"/><rect x="1293" y="541" width="1" height="11" fill="#d4d4d4"/><rect x="1293" y="553" width="1" height="11" fill="#d4d4d4"/><rect x="1293" y="565" width="1" height="11" fill="#d4d4d4"/><rect x="1293" y="577" width="1" height="11" fill="#d4d4d4"/><rect x="1293" y="589" width="1" height="11" fill="#d4d4d4"/><rect x="1293" y="601" width="1" height="11" fill="#d4d4d4"/><rect x="1293" y="613" width="1" height="11" fill="#d4d4d4"/><rect x="1293" y="625" width="1" height="11" fill="#d4d4d4"/><rect x="1293" y="637" width="1" height="11" fill="#d4d4d4"/><rect x="1293" y="649" width="1" height="11" fill="#d4d4d4"/><rect x="1293" y="661" width="1" height="11" fill="#d4d4d4"/><rect x="30" y="673" width="1" height="3" fill="#d4d4d4"/><rect x="40" y="673" width="1" height="3" fill="#d4d4d4"/><rect x="50" y="673" width="1" height="3" fill="#d4d4d4"/><rect x="244" y="673" width="1" height="3" fill="#d4d4d4"/><rect x="308" y="673" width="1" height="3" fill="#d4d4d4"/><rect x="351" y="673" width="1" height="3" fill="#d4d4d4"/><rect x="394" y="673" width="1" height="3" fill="#d4d4d4"/><rect x="453" y="673" width="1" height="3" fill="#d4d4d4"/><rect x="513" y="673" width="1" height="3" fill="#d4d4d4"/><rect x="573" y="673" width="1" height="3" fill="#d4d4d4"/><rect x="633" y="673" width="1" height="3" fill="#d4d4d4"/><rect x="693" y="673" width="1" height="3" fill="#d4d4d4"/><rect x="753" y="673" width="1" height="3" fill="#d4d4d4"/><rect x="813" y="673" width="1" height="3" fill="#d4d4d4"/><rect x="873" y="673" width="1" height="3" fill="#d4d4d4"/><rect x="933" y="673" width="1" height="3" fill="#d4d4d4"/><rect x="993" y="673" width="1" height="3" fill="#d4d4d4"/><rect x="1053" y="673" width="1" height="3" fill="#d4d4d4"/><rect x="1113" y="673" width="1" height="3" fill="#d4d4d4"/><rect x="1173" y="673" width="1" height="3" fill="#d4d4d4"/><rect x="1233" y="673" width="1" height="3" fill="#d4d4d4"/><rect x="1293" y="673" width="1" height="3" fill="#d4d4d4"/><rect x="394" y="181" width="1" height="495" fill="#9c9c9c"/><rect x="41" y="272" width="268" height="1" fill="#000"/><rect x="41" y="284" width="268" height="2" fill="#000"/><rect x="41" y="297" width="268" height="1" fill="#000"/><rect x="41" y="309" width="268" height="2" fill="#000"/><rect x="41" y="322" width="268" height="1" fill="#000"/><rect x="41" y="334" width="268" height="2" fill="#000"/><rect x="41" y="371" width="268" height="1" fill="#000"/><rect x="41" y="383" width="268" height="2" fill="#000"/></svg>
<div class="c blue" style="top:212px;left:394px;width:57.4px;text-align:right;">1</div>
<div class="c blue" style="top:212px;left:453px;width:58.4px;text-align:right;">2</div>
<div class="c blue" style="top:212px;left:513px;width:58.4px;text-align:right;">3</div>
<div class="c blue" style="top:212px;left:573px;width:58.4px;text-align:right;">4</div>
<div class="c blue" style="top:212px;left:633px;width:58.4px;text-align:right;">5</div>
<div class="c blue" style="top:212px;left:693px;width:58.4px;text-align:right;">6</div>
<div class="c blue" style="top:212px;left:753px;width:58.4px;text-align:right;">7</div>
<div class="c blue" style="top:212px;left:813px;width:58.4px;text-align:right;">8</div>
<div class="c blue" style="top:212px;left:873px;width:58.4px;text-align:right;">9</div>
<div class="c blue" style="top:212px;left:933px;width:58.4px;text-align:right;">10</div>
<div class="c blue" style="top:212px;left:993px;width:58.4px;text-align:right;">11</div>
<div class="c blue" style="top:212px;left:1053px;width:58.4px;text-align:right;">12</div>
<div class="c blue" style="top:212px;left:1113px;width:58.4px;text-align:right;">13</div>
<div class="c blue" style="top:212px;left:1173px;width:58.4px;text-align:right;">14</div>
<div class="c " style="top:224px;left:394px;width:58.5px;text-align:right;">2000</div>
<div class="c " style="top:224px;left:453px;width:59.5px;text-align:right;">2001</div>
<div class="c " style="top:224px;left:513px;width:59.5px;text-align:right;">2002</div>
<div class="c " style="top:224px;left:573px;width:59.5px;text-align:right;">2003</div>
<div class="c " style="top:224px;left:633px;width:59.5px;text-align:right;">2004</div>
<div class="c " style="top:224px;left:693px;width:59.5px;text-align:right;">2005</div>
<div class="c " style="top:224px;left:753px;width:59.5px;text-align:right;">2006</div>
<div class="c " style="top:224px;left:813px;width:59.5px;text-align:right;">2007</div>
<div class="c " style="top:224px;left:873px;width:59.5px;text-align:right;">2008</div>
<div class="c " style="top:224px;left:933px;width:59.5px;text-align:right;">2009</div>
<div class="c " style="top:224px;left:993px;width:59.5px;text-align:right;">2010</div>
<div class="c " style="top:224px;left:1053px;width:59.5px;text-align:right;">2011</div>
<div class="c " style="top:224px;left:1113px;width:59.5px;text-align:right;">2012</div>
<div class="c " style="top:224px;left:1173px;width:59.5px;text-align:right;">2013</div>
<div class="c " style="top:224px;left:1233px;width:59.5px;text-align:right;">2014</div>
<div class="c hd" style="top:237px;left:22px;">After Tax Cash Flow</div>
<div class="c hd dash" style="top:237px;left:394px;width:46.2px;text-align:right;">-</div>
<div class="c hd dash" style="top:237px;left:453px;width:46.2px;text-align:right;">-</div>
<div class="c hd dash" style="top:237px;left:513px;width:46.2px;text-align:right;">-</div>
<div class="c hd dash" style="top:237px;left:573px;width:46.2px;text-align:right;">-</div>
<div class="c hd dash" style="top:237px;left:633px;width:46.2px;text-align:right;">-</div>
<div class="c hd dash" style="top:237px;left:693px;width:46.2px;text-align:right;">-</div>
<div class="c hd dash" style="top:237px;left:753px;width:46.2px;text-align:right;">-</div>
<div class="c hd dash" style="top:237px;left:813px;width:46.2px;text-align:right;">-</div>
<div class="c hd dash" style="top:237px;left:873px;width:46.2px;text-align:right;">-</div>
<div class="c hd dash" style="top:237px;left:933px;width:46.2px;text-align:right;">-</div>
<div class="c hd dash" style="top:237px;left:993px;width:46.2px;text-align:right;">-</div>
<div class="c hd dash" style="top:237px;left:1053px;width:46.2px;text-align:right;">-</div>
<div class="c hd dash" style="top:237px;left:1113px;width:46.2px;text-align:right;">-</div>
<div class="c hd dash" style="top:237px;left:1173px;width:46.2px;text-align:right;">-</div>
<div class="c hd dash" style="top:237px;left:1233px;width:46.2px;text-align:right;">-</div>
<div class="c dash" style="top:249px;left:394px;width:46.2px;text-align:right;">-</div>
<div class="c dash" style="top:249px;left:453px;width:46.2px;text-align:right;">-</div>
<div class="c dash" style="top:249px;left:513px;width:46.2px;text-align:right;">-</div>
<div class="c dash" style="top:249px;left:573px;width:46.2px;text-align:right;">-</div>
<div class="c dash" style="top:249px;left:633px;width:46.2px;text-align:right;">-</div>
<div class="c " style="top:249px;left:693px;width:56.3px;text-align:right;">280,296</div>
<div class="c " style="top:249px;left:753px;width:56.3px;text-align:right;">228,761</div>
<div class="c " style="top:249px;left:813px;width:56.3px;text-align:right;">221,553</div>
<div class="c " style="top:249px;left:873px;width:56.3px;text-align:right;">147,521</div>
<div class="c " style="top:249px;left:933px;width:56.3px;text-align:right;">149,560</div>
<div class="c " style="top:249px;left:993px;width:56.3px;text-align:right;">272,586</div>
<div class="c " style="top:249px;left:1053px;width:56.3px;text-align:right;">316,509</div>
<div class="c " style="top:249px;left:1113px;width:56.3px;text-align:right;">223,437</div>
<div class="c " style="top:249px;left:1173px;width:56.3px;text-align:right;">125,640</div>
<div class="c " style="top:249px;left:1233px;width:56.3px;text-align:right;">127,000</div>
<div class="c dash" style="top:261px;left:394px;width:46.2px;text-align:right;">-</div>
<div class="c dash" style="top:261px;left:453px;width:46.2px;text-align:right;">-</div>
<div class="c dash" style="top:261px;left:513px;width:46.2px;text-align:right;">-</div>
<div class="c dash" style="top:261px;left:573px;width:46.2px;text-align:right;">-</div>
<div class="c dash" style="top:261px;left:633px;width:46.2px;text-align:right;">-</div>
<div class="c " style="top:261px;left:693px;width:56.3px;text-align:right;">24,517</div>
<div class="c " style="top:261px;left:753px;width:56.3px;text-align:right;">73,550</div>
<div class="c " style="top:261px;left:813px;width:56.3px;text-align:right;">73,550</div>
<div class="c " style="top:261px;left:873px;width:56.3px;text-align:right;">73,550</div>
<div class="c " style="top:261px;left:933px;width:56.3px;text-align:right;">73,550</div>
<div class="c " style="top:261px;left:993px;width:56.3px;text-align:right;">73,550</div>
<div class="c " style="top:261px;left:1053px;width:56.3px;text-align:right;">73,550</div>
<div class="c " style="top:261px;left:1113px;width:56.3px;text-align:right;">93,550</div>
<div class="c " style="top:261px;left:1173px;width:56.3px;text-align:right;">73,550</div>
<div class="c " style="top:261px;left:1233px;width:56.3px;text-align:right;">73,550</div>
<div class="c dash" style="top:273px;left:394px;width:46.2px;text-align:right;">-</div>
<div class="c dash" style="top:273px;left:453px;width:46.2px;text-align:right;">-</div>
<div class="c dash" style="top:273px;left:513px;width:46.2px;text-align:right;">-</div>
<div class="c dash" style="top:273px;left:573px;width:46.2px;text-align:right;">-</div>
<div class="c dash" style="top:273px;left:633px;width:46.2px;text-align:right;">-</div>
<div class="c " style="top:273px;left:693px;width:56.3px;text-align:right;">255,779</div>
<div class="c " style="top:273px;left:753px;width:56.3px;text-align:right;">155,211</div>
<div class="c " style="top:273px;left:813px;width:56.3px;text-align:right;">148,003</div>
<div class="c " style="top:273px;left:873px;width:56.3px;text-align:right;">73,971</div>
<div class="c " style="top:273px;left:933px;width:56.3px;text-align:right;">76,010</div>
<div class="c " style="top:273px;left:993px;width:56.3px;text-align:right;">199,036</div>
<div class="c " style="top:273px;left:1053px;width:56.3px;text-align:right;">242,959</div>
<div class="c " style="top:273px;left:1113px;width:56.3px;text-align:right;">129,887</div>
<div class="c " style="top:273px;left:1173px;width:56.3px;text-align:right;">52,090</div>
<div class="c " style="top:273px;left:1233px;width:56.3px;text-align:right;">53,500</div>
<div class="c dash" style="top:286px;left:394px;width:46.2px;text-align:right;">-</div>
<div class="c dash" style="top:286px;left:453px;width:46.2px;text-align:right;">-</div>
<div class="c dash" style="top:286px;left:513px;width:46.2px;text-align:right;">-</div>
<div class="c dash" style="top:286px;left:573px;width:46.2px;text-align:right;">-</div>
<div class="c dash" style="top:286px;left:633px;width:46.2px;text-align:right;">-</div>
<div class="c " style="top:286px;left:693px;width:56.3px;text-align:right;">20,333</div>
<div class="c " style="top:286px;left:753px;width:56.3px;text-align:right;">61,000</div>
<div class="c " style="top:286px;left:813px;width:56.3px;text-align:right;">61,000</div>
<div class="c " style="top:286px;left:873px;width:56.3px;text-align:right;">61,000</div>
<div class="c " style="top:286px;left:933px;width:56.3px;text-align:right;">61,000</div>
<div class="c " style="top:286px;left:993px;width:56.3px;text-align:right;">61,000</div>
<div class="c " style="top:286px;left:1053px;width:56.3px;text-align:right;">61,000</div>
<div class="c " style="top:286px;left:1113px;width:56.3px;text-align:right;">61,000</div>
<div class="c " style="top:286px;left:1173px;width:56.3px;text-align:right;">61,000</div>
<div class="c " style="top:286px;left:1233px;width:56.3px;text-align:right;">61,000</div>
<div class="c dash" style="top:298px;left:394px;width:46.2px;text-align:right;">-</div>
<div class="c dash" style="top:298px;left:453px;width:46.2px;text-align:right;">-</div>
<div class="c dash" style="top:298px;left:513px;width:46.2px;text-align:right;">-</div>
<div class="c dash" style="top:298px;left:573px;width:46.2px;text-align:right;">-</div>
<div class="c dash" style="top:298px;left:633px;width:46.2px;text-align:right;">-</div>
<div class="c " style="top:298px;left:693px;width:56.3px;text-align:right;">235,446</div>
<div class="c " style="top:298px;left:753px;width:56.3px;text-align:right;">94,211</div>
<div class="c " style="top:298px;left:813px;width:56.3px;text-align:right;">87,003</div>
<div class="c " style="top:298px;left:873px;width:56.3px;text-align:right;">12,971</div>
<div class="c " style="top:298px;left:933px;width:56.3px;text-align:right;">15,010</div>
<div class="c " style="top:298px;left:993px;width:56.3px;text-align:right;">138,036</div>
<div class="c " style="top:298px;left:1053px;width:56.3px;text-align:right;">181,959</div>
<div class="c " style="top:298px;left:1113px;width:56.3px;text-align:right;">68,887</div>
<div class="c " style="top:298px;left:1173px;width:59.5px;text-align:right;">(8,910)</div>
<div class="c " style="top:298px;left:1233px;width:59.5px;text-align:right;">(7,400)</div>
<div class="c dash" style="top:311px;left:394px;width:46.2px;text-align:right;">-</div>
<div class="c dash" style="top:311px;left:453px;width:46.2px;text-align:right;">-</div>
<div class="c dash" style="top:311px;left:513px;width:46.2px;text-align:right;">-</div>
<div class="c dash" style="top:311px;left:573px;width:46.2px;text-align:right;">-</div>
<div class="c dash" style="top:311px;left:633px;width:46.2px;text-align:right;">-</div>
<div class="c " style="top:311px;left:693px;width:56.3px;text-align:right;">58,861</div>
<div class="c " style="top:311px;left:753px;width:56.3px;text-align:right;">23,553</div>
<div class="c " style="top:311px;left:813px;width:56.3px;text-align:right;">21,751</div>
<div class="c " style="top:311px;left:873px;width:56.3px;text-align:right;">3,243</div>
<div class="c " style="top:311px;left:933px;width:56.3px;text-align:right;">3,753</div>
<div class="c " style="top:311px;left:993px;width:56.3px;text-align:right;">34,509</div>
<div class="c " style="top:311px;left:1053px;width:56.3px;text-align:right;">45,490</div>
<div class="c " style="top:311px;left:1113px;width:56.3px;text-align:right;">17,222</div>
<div class="c " style="top:311px;left:1173px;width:59.5px;text-align:right;">(2,227)</div>
<div class="c " style="top:311px;left:1233px;width:59.5px;text-align:right;">(1,800)</div>
<div class="c dash" style="top:323px;left:394px;width:46.2px;text-align:right;">-</div>
<div class="c dash" style="top:323px;left:453px;width:46.2px;text-align:right;">-</div>
<div class="c dash" style="top:323px;left:513px;width:46.2px;text-align:right;">-</div>
<div class="c dash" style="top:323px;left:573px;width:46.2px;text-align:right;">-</div>
<div class="c dash" style="top:323px;left:633px;width:46.2px;text-align:right;">-</div>
<div class="c " style="top:323px;left:693px;width:56.3px;text-align:right;">176,584</div>
<div class="c " style="top:323px;left:753px;width:56.3px;text-align:right;">70,658</div>
<div class="c " style="top:323px;left:813px;width:56.3px;text-align:right;">65,252</div>
<div class="c " style="top:323px;left:873px;width:56.3px;text-align:right;">9,728</div>
<div class="c " style="top:323px;left:933px;width:56.3px;text-align:right;">11,258</div>
<div class="c " style="top:323px;left:993px;width:56.3px;text-align:right;">103,527</div>
<div class="c " style="top:323px;left:1053px;width:56.3px;text-align:right;">136,470</div>
<div class="c " style="top:323px;left:1113px;width:56.3px;text-align:right;">51,665</div>
<div class="c " style="top:323px;left:1173px;width:59.5px;text-align:right;">(6,682)</div>
<div class="c " style="top:323px;left:1233px;width:59.5px;text-align:right;">(5,500)</div>
<div class="c dash" style="top:336px;left:394px;width:46.2px;text-align:right;">-</div>
<div class="c dash" style="top:336px;left:453px;width:46.2px;text-align:right;">-</div>
<div class="c dash" style="top:336px;left:513px;width:46.2px;text-align:right;">-</div>
<div class="c dash" style="top:336px;left:573px;width:46.2px;text-align:right;">-</div>
<div class="c dash" style="top:336px;left:633px;width:46.2px;text-align:right;">-</div>
<div class="c dash" style="top:336px;left:693px;width:46.2px;text-align:right;">-</div>
<div class="c dash" style="top:336px;left:753px;width:46.2px;text-align:right;">-</div>
<div class="c dash" style="top:336px;left:813px;width:46.2px;text-align:right;">-</div>
<div class="c dash" style="top:336px;left:873px;width:46.2px;text-align:right;">-</div>
<div class="c dash" style="top:336px;left:933px;width:46.2px;text-align:right;">-</div>
<div class="c dash" style="top:336px;left:993px;width:46.2px;text-align:right;">-</div>
<div class="c dash" style="top:336px;left:1053px;width:46.2px;text-align:right;">-</div>
<div class="c dash" style="top:336px;left:1113px;width:46.2px;text-align:right;">-</div>
<div class="c dash" style="top:336px;left:1173px;width:46.2px;text-align:right;">-</div>
<div class="c dash" style="top:336px;left:1233px;width:46.2px;text-align:right;">-</div>
<div class="c " style="top:348px;left:394px;width:59.5px;text-align:right;">(13,333)</div>
<div class="c " style="top:348px;left:453px;width:59.5px;text-align:right;">(40,000)</div>
<div class="c " style="top:348px;left:513px;width:59.5px;text-align:right;">(166,667)</div>
<div class="c " style="top:348px;left:573px;width:59.5px;text-align:right;">(595,000)</div>
<div class="c " style="top:348px;left:633px;width:59.5px;text-align:right;">(626,131)</div>
<div class="c " style="top:348px;left:693px;width:59.5px;text-align:right;">(133,091)</div>
<div class="c " style="top:348px;left:753px;width:56.3px;text-align:right;">155,211</div>
<div class="c " style="top:348px;left:813px;width:56.3px;text-align:right;">148,003</div>
<div class="c " style="top:348px;left:873px;width:56.3px;text-align:right;">73,971</div>
<div class="c " style="top:348px;left:933px;width:56.3px;text-align:right;">76,010</div>
<div class="c " style="top:348px;left:993px;width:56.3px;text-align:right;">199,036</div>
<div class="c " style="top:348px;left:1053px;width:56.3px;text-align:right;">242,959</div>
<div class="c " style="top:348px;left:1113px;width:56.3px;text-align:right;">129,887</div>
<div class="c " style="top:348px;left:1173px;width:56.3px;text-align:right;">52,090</div>
<div class="c " style="top:348px;left:1233px;width:56.3px;text-align:right;">53,500</div>
<div class="c dash" style="top:360px;left:394px;width:46.2px;text-align:right;">-</div>
<div class="c dash" style="top:360px;left:453px;width:46.2px;text-align:right;">-</div>
<div class="c dash" style="top:360px;left:513px;width:46.2px;text-align:right;">-</div>
<div class="c dash" style="top:360px;left:573px;width:46.2px;text-align:right;">-</div>
<div class="c dash" style="top:360px;left:633px;width:46.2px;text-align:right;">-</div>
<div class="c " style="top:360px;left:693px;width:56.3px;text-align:right;">58,861</div>
<div class="c " style="top:360px;left:753px;width:56.3px;text-align:right;">23,553</div>
<div class="c " style="top:360px;left:813px;width:56.3px;text-align:right;">21,751</div>
<div class="c " style="top:360px;left:873px;width:56.3px;text-align:right;">3,243</div>
<div class="c " style="top:360px;left:933px;width:56.3px;text-align:right;">3,753</div>
<div class="c " style="top:360px;left:993px;width:56.3px;text-align:right;">34,509</div>
<div class="c " style="top:360px;left:1053px;width:56.3px;text-align:right;">45,490</div>
<div class="c " style="top:360px;left:1113px;width:56.3px;text-align:right;">17,222</div>
<div class="c " style="top:360px;left:1173px;width:59.5px;text-align:right;">(2,227)</div>
<div class="c " style="top:360px;left:1233px;width:59.5px;text-align:right;">(1,800)</div>
<div class="c " style="top:372px;left:394px;width:59.5px;text-align:right;">(13,333)</div>
<div class="c " style="top:372px;left:453px;width:59.5px;text-align:right;">(40,000)</div>
<div class="c " style="top:372px;left:513px;width:59.5px;text-align:right;">(166,667)</div>
<div class="c " style="top:372px;left:573px;width:59.5px;text-align:right;">(595,000)</div>
<div class="c " style="top:372px;left:633px;width:59.5px;text-align:right;">(626,131)</div>
<div class="c " style="top:372px;left:693px;width:59.5px;text-align:right;">(191,952)</div>
<div class="c " style="top:372px;left:753px;width:56.3px;text-align:right;">131,658</div>
<div class="c " style="top:372px;left:813px;width:56.3px;text-align:right;">126,252</div>
<div class="c " style="top:372px;left:873px;width:56.3px;text-align:right;">70,728</div>
<div class="c " style="top:372px;left:933px;width:56.3px;text-align:right;">72,258</div>
<div class="c " style="top:372px;left:993px;width:56.3px;text-align:right;">164,527</div>
<div class="c " style="top:372px;left:1053px;width:56.3px;text-align:right;">197,470</div>
<div class="c " style="top:372px;left:1113px;width:56.3px;text-align:right;">112,665</div>
<div class="c " style="top:372px;left:1173px;width:56.3px;text-align:right;">54,318</div>
<div class="c " style="top:372px;left:1233px;width:56.3px;text-align:right;">55,400</div>
<div class="c dash" style="top:385px;left:394px;width:46.2px;text-align:right;">-</div>
<div class="c dash" style="top:385px;left:453px;width:46.2px;text-align:right;">-</div>
<div class="c dash" style="top:385px;left:513px;width:46.2px;text-align:right;">-</div>
<div class="c dash" style="top:385px;left:573px;width:46.2px;text-align:right;">-</div>
<div class="c dash" style="top:385px;left:633px;width:46.2px;text-align:right;">-</div>
<div class="c dash" style="top:385px;left:693px;width:46.2px;text-align:right;">-</div>
<div class="c dash" style="top:385px;left:753px;width:46.2px;text-align:right;">-</div>
<div class="c dash" style="top:385px;left:813px;width:46.2px;text-align:right;">-</div>
<div class="c dash" style="top:385px;left:873px;width:46.2px;text-align:right;">-</div>
<div class="c dash" style="top:385px;left:933px;width:46.2px;text-align:right;">-</div>
<div class="c dash" style="top:385px;left:993px;width:46.2px;text-align:right;">-</div>
<div class="c dash" style="top:385px;left:1053px;width:46.2px;text-align:right;">-</div>
<div class="c dash" style="top:385px;left:1113px;width:46.2px;text-align:right;">-</div>
<div class="c dash" style="top:385px;left:1173px;width:46.2px;text-align:right;">-</div>
<div class="c dash" style="top:385px;left:1233px;width:46.2px;text-align:right;">-</div>
<div class="c dash" style="top:397px;left:394px;width:46.2px;text-align:right;">-</div>
<div class="c dash" style="top:397px;left:453px;width:46.2px;text-align:right;">-</div>
<div class="c dash" style="top:397px;left:513px;width:46.2px;text-align:right;">-</div>
<div class="c dash" style="top:397px;left:573px;width:46.2px;text-align:right;">-</div>
<div class="c dash" style="top:397px;left:633px;width:46.2px;text-align:right;">-</div>
<div class="c dash" style="top:397px;left:693px;width:46.2px;text-align:right;">-</div>
<div class="c dash" style="top:397px;left:753px;width:46.2px;text-align:right;">-</div>
<div class="c dash" style="top:397px;left:813px;width:46.2px;text-align:right;">-</div>
<div class="c dash" style="top:397px;left:873px;width:46.2px;text-align:right;">-</div>
<div class="c dash" style="top:397px;left:933px;width:46.2px;text-align:right;">-</div>
<div class="c dash" style="top:397px;left:993px;width:46.2px;text-align:right;">-</div>
<div class="c dash" style="top:397px;left:1053px;width:46.2px;text-align:right;">-</div>
<div class="c dash" style="top:397px;left:1113px;width:46.2px;text-align:right;">-</div>
<div class="c dash" style="top:397px;left:1173px;width:46.2px;text-align:right;">-</div>
<div class="c dash" style="top:397px;left:1233px;width:46.2px;text-align:right;">-</div>
<div class="c dash" style="top:409px;left:394px;width:46.2px;text-align:right;">-</div>
<div class="c dash" style="top:409px;left:453px;width:46.2px;text-align:right;">-</div>
<div class="c dash" style="top:409px;left:513px;width:46.2px;text-align:right;">-</div>
<div class="c dash" style="top:409px;left:573px;width:46.2px;text-align:right;">-</div>
<div class="c dash" style="top:409px;left:633px;width:46.2px;text-align:right;">-</div>
<div class="c dash" style="top:409px;left:693px;width:46.2px;text-align:right;">-</div>
<div class="c dash" style="top:409px;left:753px;width:46.2px;text-align:right;">-</div>
<div class="c dash" style="top:409px;left:813px;width:46.2px;text-align:right;">-</div>
<div class="c dash" style="top:409px;left:873px;width:46.2px;text-align:right;">-</div>
<div class="c dash" style="top:409px;left:933px;width:46.2px;text-align:right;">-</div>
<div class="c dash" style="top:409px;left:993px;width:46.2px;text-align:right;">-</div>
<div class="c dash" style="top:409px;left:1053px;width:46.2px;text-align:right;">-</div>
<div class="c dash" style="top:409px;left:1113px;width:46.2px;text-align:right;">-</div>
<div class="c dash" style="top:409px;left:1173px;width:46.2px;text-align:right;">-</div>
<div class="c dash" style="top:409px;left:1233px;width:46.2px;text-align:right;">-</div>
<div class="c " style="top:249px;left:42px;">Revenues</div>
<div class="c " style="top:261px;left:42px;">Less: Operating Expense</div>
<div class="c " style="top:273px;left:42px;">EBITDA</div>
<div class="c " style="top:286px;left:42px;">Less: Depreciation</div>
<div class="c " style="top:298px;left:42px;">EBIT</div>
<div class="c " style="top:311px;left:42px;">Taxes on EBIT</div>
<div class="c " style="top:323px;left:42px;">Earnings After Tax</div>
<div class="c " style="top:348px;left:42px;">Pre-tax Cash Flow</div>
<div class="c " style="top:360px;left:42px;">Less: Taxes</div>
<div class="c " style="top:372px;left:42px;">After Tax Cash Flow</div>
<div class="c " style="top:397px;left:42px;">After Tax Project IRR</div>
<div class="c " style="top:505px;left:52px;">Row Number</div>
<div class="c blue" style="top:505px;left:245px;width:61.0px;text-align:right;">7</div>
<div class="c " style="top:541px;left:52px;">Adjusted Energy Generation</div>
<div class="c " style="top:541px;left:310px;">MWH</div>
<div class="c " style="top:529px;left:394px;width:58.7px;text-align:right;">2000</div>
<div class="c " style="top:541px;left:394px;width:59.4px;text-align:right;">0</div>
<div class="c " style="top:529px;left:453px;width:58.7px;text-align:right;">2001</div>
<div class="c " style="top:541px;left:453px;width:59.4px;text-align:right;">0</div>
<div class="c " style="top:529px;left:513px;width:58.7px;text-align:right;">2002</div>
<div class="c " style="top:541px;left:513px;width:59.4px;text-align:right;">0</div>
<div class="c " style="top:529px;left:573px;width:58.7px;text-align:right;">2003</div>
<div class="c " style="top:541px;left:573px;width:59.4px;text-align:right;">0</div>
<div class="c " style="top:529px;left:633px;width:58.7px;text-align:right;">2004</div>
<div class="c " style="top:541px;left:633px;width:59.4px;text-align:right;">0</div>
<div class="c " style="top:529px;left:693px;width:58.7px;text-align:right;">2005</div>
<div class="c " style="top:541px;left:693px;width:59.4px;text-align:right;">0</div>
<div class="c " style="top:529px;left:753px;width:58.7px;text-align:right;">2006</div>
<div class="c " style="top:541px;left:753px;width:59.4px;text-align:right;">203078.9779</div>
<div class="c " style="top:529px;left:813px;width:58.7px;text-align:right;">2007</div>
<div class="c " style="top:541px;left:813px;width:59.4px;text-align:right;">462077.3328</div>
<div class="c " style="top:529px;left:873px;width:58.7px;text-align:right;">2008</div>
<div class="c " style="top:541px;left:873px;width:59.4px;text-align:right;">218448.628</div>
<div class="c " style="top:529px;left:933px;width:58.7px;text-align:right;">2009</div>
<div class="c " style="top:541px;left:933px;width:59.4px;text-align:right;">150946.6407</div>
<div class="c " style="top:529px;left:993px;width:58.7px;text-align:right;">2010</div>
<div class="c " style="top:541px;left:993px;width:59.4px;text-align:right;">152238.8318</div>
<div class="c " style="top:529px;left:1053px;width:58.7px;text-align:right;">2011</div>
<div class="c " style="top:541px;left:1053px;width:59.4px;text-align:right;">234188.9822</div>
<div class="c " style="top:529px;left:1113px;width:58.7px;text-align:right;">2012</div>
<div class="c " style="top:541px;left:1113px;width:59.4px;text-align:right;">301534.3794</div>
<div class="c " style="top:529px;left:1173px;width:58.7px;text-align:right;">2013</div>
<div class="c " style="top:541px;left:1173px;width:59.4px;text-align:right;">264408.6945</div>
<div class="c " style="top:529px;left:1233px;width:58.7px;text-align:right;">2014</div>
<div class="c " style="top:541px;left:1233px;width:59.4px;text-align:right;">136023.4321</div>
<!-- spinner -->
<div class="abs" style="left:326px;top:503px;width:21px;height:12px;background:#dcdcdc;border:1px solid #222;border-radius:1px"></div>
<div class="abs" style="left:327px;top:508.500px;width:19px;height:1px;background:#222"></div>
<div class="abs" style="left:335px;top:505px;width:0;height:0;border-left:1.500px solid transparent;border-right:1.500px solid transparent;border-bottom:2px solid #111"></div>
<div class="abs" style="left:335px;top:511px;width:0;height:0;border-left:1.500px solid transparent;border-right:1.500px solid transparent;border-top:2px solid #111"></div>
<!-- combo -->
<div class="abs" style="left:462.500px;top:506.500px;width:120.500px;height:12.500px;background:#fff"></div>
<div class="c" style="left:466px;top:509px;line-height:11px;height:11px">Adjusted Energy Generation</div>
<div class="abs" style="left:570.500px;top:507.500px;width:12px;height:11px;background:#d4d4d4;border:1px solid #222"></div>
<div class="abs" style="left:573.500px;top:511px;width:0;height:0;border-left:3px solid transparent;border-right:3px solid transparent;border-top:3.500px solid #222"></div>
</div>
<div id="tabs"></div>
<div class="abs" style="left:491px;top:676px;width:102px;height:24px;background:#fff;border:1px solid #c2c2c2;border-top:none;border-radius:0 0 4px 4px"></div>
<div class="abs" style="left:211px;top:676px;width:72px;height:4px;background:#f0697a"></div>
<div class="abs" style="left:15.500px;top:684px;width:0;height:0;border-top:5px solid transparent;border-bottom:5px solid transparent;border-right:7px solid #8a8a8a"></div>
<div class="abs" style="left:39px;top:684px;width:0;height:0;border-top:5px solid transparent;border-bottom:5px solid transparent;border-left:7px solid #555"></div>
<div class="ts" style="left:61px"></div>
<div class="ts" style="left:134px"></div>
<div class="ts" style="left:210px"></div>
<div class="ts" style="left:283px"></div>
<div class="ts" style="left:379px"></div>
<div class="ts" style="left:706px"></div>
<div class="ts" style="left:819px"></div>
<div class="ts" style="left:951px"></div>
<div class="ts" style="left:1088px"></div>
<div class="ts" style="left:1212px"></div>
<div class="ts" style="left:1249px"></div>
<div class="st" style="left:80px">Points</div>
<div class="st" style="left:146px">Summary</div>
<div class="st" style="left:222px">Scenario</div>
<div class="st" style="left:295px">Assumptions</div>
<div class="st" style="left:391px">Financial Model</div>
<div class="st" style="left:502px;font-weight:bold;color:#1d7f4e;font-size:12px">Annual Model</div>
<div class="st" style="left:604px">Raw Inflow Data</div>
<div class="st" style="left:718px">Annual Variation</div>
<div class="st" style="left:831px">Monthly Production</div>
<div class="st" style="left:963px">Potential Production</div>
<div class="st" style="left:1100px;width:108px;overflow:hidden">Annual Shortfall Ex</div>
<div class="abs" style="left:1185px;top:681px;width:27px;height:18px;background:linear-gradient(90deg,rgba(242,242,242,0),rgba(242,242,242,1))"></div>
<svg class="abs" style="left:1225px;top:683px" width="12" height="12" viewBox="0 0 12 12"><path d="M6 1v10M1 6h10" stroke="#444" stroke-width="1.600"/></svg>
<div id="status"></div>
<div class="abs" style="left:25px;top:707px;font-size:12.450px;line-height:15px;color:#444">Ready</div>
<div class="abs" style="left:995px;top:703px;width:37px;height:22px;background:#b4b4b4"></div>
<svg class="abs" style="left:1007px;top:707.500px" width="13" height="13" viewBox="0 0 13 13"><g fill="#fbfbfb"><rect x="0" y="0" width="3.400" height="3.300"/><rect x="4.650" y="0" width="3.400" height="3.300"/><rect x="9.300" y="0" width="3.400" height="3.300"/><rect x="0" y="4.500" width="3.400" height="3.300"/><rect x="4.650" y="4.500" width="3.400" height="3.300"/><rect x="9.300" y="4.500" width="3.400" height="3.300"/><rect x="0" y="9" width="3.400" height="3.300"/><rect x="4.650" y="9" width="3.400" height="3.300"/><rect x="9.300" y="9" width="3.400" height="3.300"/></g></svg>
<svg class="abs" style="left:1042px;top:707.500px" width="14" height="13" viewBox="0 0 14 13"><rect x="0.700" y="0.700" width="12.600" height="11.400" fill="#f6f6f6" stroke="#5a5a5a" stroke-width="1.100"/><rect x="3.300" y="2.900" width="7.400" height="7" fill="none" stroke="#5a5a5a" stroke-width="0.900"/><path d="M4.800 5h4.400M4.800 6.700h4.400M4.800 8.300h4.400" stroke="#5a5a5a" stroke-width="0.700"/></svg>
<div class="abs" style="left:1074px;top:714px;width:8px;height:2px;background:#555"></div>
<div class="abs" style="left:1090px;top:712px;width:100px;height:4px;background:#a4a4a4;border-radius:2px"></div>
<div class="abs" style="left:1139px;top:712.500px;width:2px;height:3px;background:#dcdcdc"></div>
<div class="abs" style="left:1125px;top:708.500px;width:11.500px;height:11.500px;border-radius:6px;background:#fdfdfd;border:1px solid #bdbdbd;box-shadow:0 0.500px 1px rgba(0,0,0,.3)"></div>
<svg class="abs" style="left:1196px;top:710px" width="10" height="10" viewBox="0 0 10 10"><path d="M5 0.500v9M0.500 5h9" stroke="#555" stroke-width="1.600"/></svg>
<div class="abs" style="left:1225px;top:707px;font-size:12.500px;line-height:15px;color:#444">80%</div>
<div class="abs" style="left:0;top:725px;width:1280px;height:1px;background:linear-gradient(90deg,#1a1a1a 0,#1a1a1a 40px,#7a4a48 200px,#a05a58 640px,#8a6a68 1280px)"></div>
<div id="leftedge"></div>
</div>
</body></html>
